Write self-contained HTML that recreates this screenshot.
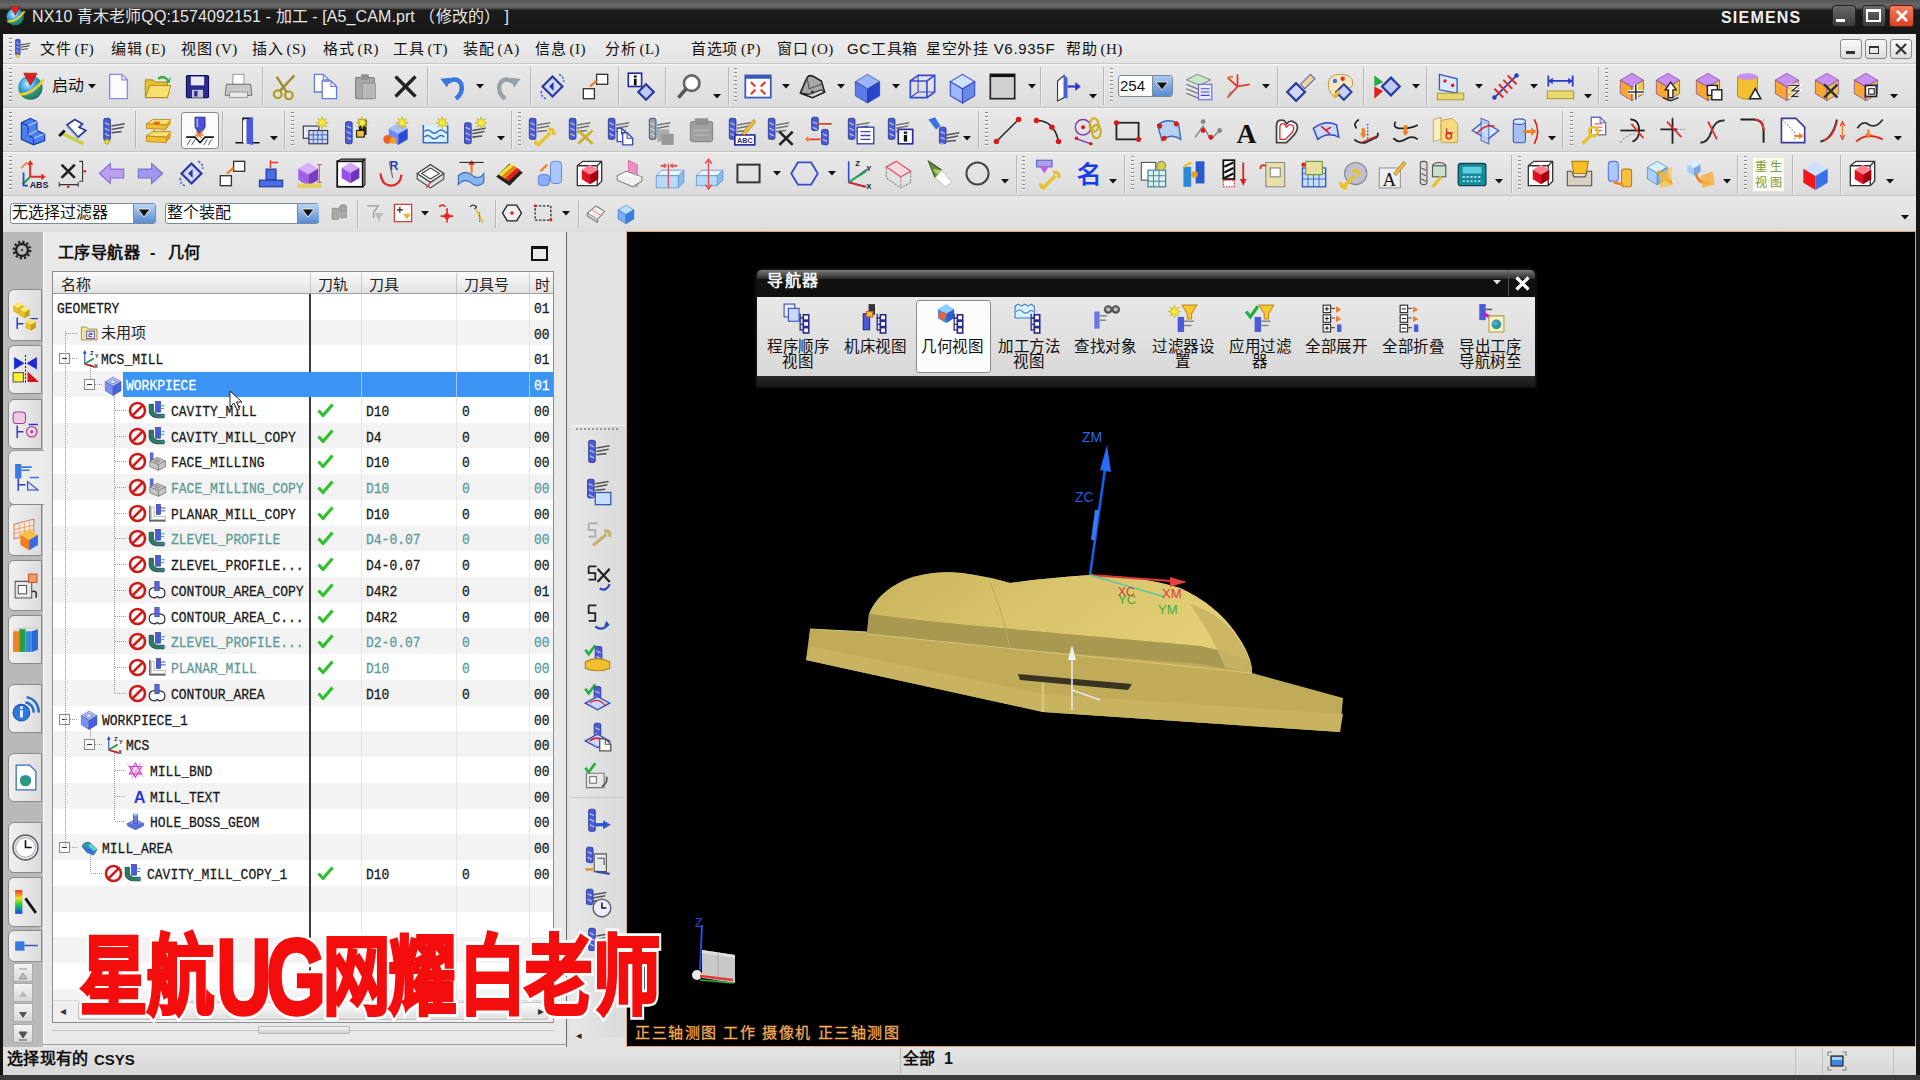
<!DOCTYPE html><html lang="zh-CN"><head><meta charset="utf-8"><style>
*{margin:0;padding:0;box-sizing:border-box}
html,body{width:1920px;height:1080px;overflow:hidden;background:#2b2b2b}
body{position:relative;font-family:"Liberation Sans",sans-serif;color:#000}
.a{position:absolute}
.t{position:absolute;white-space:nowrap;line-height:1}
.m{font-family:"Liberation Mono",monospace;-webkit-text-stroke:0.25px currentColor;transform:scaleY(1.18);transform-origin:0 50%}
svg{position:absolute;overflow:visible}
</style></head><body>
<div class="a" style="left:0px;top:0px;width:1920px;height:34px;background:linear-gradient(#555 0,#676767 5px,#5a5a5a 8px,#1c1c1c 10px,#171717 100%)"></div>
<div class="t" style="left:32px;top:9px;color:#e8e8e8;font-size:16px;letter-spacing:0.1px">NX10 青木老师QQ:1574092151 - 加工 - [A5_CAM.prt （修改的） ]</div>
<div class="t" style="left:1721px;top:10px;color:#f0f0f0;font-size:16px;font-weight:bold;letter-spacing:1.2px">SIEMENS</div>
<div class="a" style="left:0px;top:34px;width:3px;height:1041px;background:#151515"></div>
<div class="a" style="left:1916px;top:34px;width:4px;height:1041px;background:#151515"></div>
<div class="a" style="left:0px;top:1075px;width:1920px;height:5px;background:#3a3a3a"></div>
<div class="a" style="left:3px;top:34px;width:1913px;height:30px;background:linear-gradient(#ececec,#e4e4e4);border-bottom:1px solid #c8c8c8"></div>
<div class="a" style="left:3px;top:64px;width:1913px;height:44px;background:linear-gradient(#e9e9e9,#dcdcdc);border-bottom:1px solid #c4c4c4;border-top:1px solid #f6f6f6"></div>
<div class="a" style="left:3px;top:108px;width:1913px;height:44px;background:linear-gradient(#e9e9e9,#dcdcdc);border-bottom:1px solid #c4c4c4;border-top:1px solid #f6f6f6"></div>
<div class="a" style="left:3px;top:152px;width:1913px;height:44px;background:linear-gradient(#e9e9e9,#dcdcdc);border-bottom:1px solid #c4c4c4;border-top:1px solid #f6f6f6"></div>
<div class="a" style="left:3px;top:196px;width:1913px;height:36px;background:linear-gradient(#e8e8e8,#dedede)"></div>
<div class="a" style="left:3px;top:232px;width:40px;height:815px;background:#b9b9b9"></div>
<div class="a" style="left:43px;top:232px;width:524px;height:815px;background:#e9e9e9;border-left:1px solid #f8f8f8;border-right:1px solid #6a6a6a"></div>
<div class="a" style="left:567px;top:232px;width:60px;height:815px;background:#e2e2e2"></div>
<div class="a" style="left:626px;top:231px;width:1290px;height:816px;background:#000;border:1px solid #d8a878"></div>
<div class="a" style="left:3px;top:1047px;width:1913px;height:28px;background:linear-gradient(#e4e4e4,#d8d8d8)"></div>
<div class="t" style="left:40px;top:41px;font-size:15px;color:#111;letter-spacing:0.7px">文件<span style="font-family:\'Liberation Serif\',serif;margin-left:3px;letter-spacing:0.5px">(F)</span></div>
<div class="t" style="left:111px;top:41px;font-size:15px;color:#111;letter-spacing:0.7px">编辑<span style="font-family:\'Liberation Serif\',serif;margin-left:3px;letter-spacing:0.5px">(E)</span></div>
<div class="t" style="left:181px;top:41px;font-size:15px;color:#111;letter-spacing:0.7px">视图<span style="font-family:\'Liberation Serif\',serif;margin-left:3px;letter-spacing:0.5px">(V)</span></div>
<div class="t" style="left:252px;top:41px;font-size:15px;color:#111;letter-spacing:0.7px">插入<span style="font-family:\'Liberation Serif\',serif;margin-left:3px;letter-spacing:0.5px">(S)</span></div>
<div class="t" style="left:323px;top:41px;font-size:15px;color:#111;letter-spacing:0.7px">格式<span style="font-family:\'Liberation Serif\',serif;margin-left:3px;letter-spacing:0.5px">(R)</span></div>
<div class="t" style="left:393px;top:41px;font-size:15px;color:#111;letter-spacing:0.7px">工具<span style="font-family:\'Liberation Serif\',serif;margin-left:3px;letter-spacing:0.5px">(T)</span></div>
<div class="t" style="left:463px;top:41px;font-size:15px;color:#111;letter-spacing:0.7px">装配<span style="font-family:\'Liberation Serif\',serif;margin-left:3px;letter-spacing:0.5px">(A)</span></div>
<div class="t" style="left:535px;top:41px;font-size:15px;color:#111;letter-spacing:0.7px">信息<span style="font-family:\'Liberation Serif\',serif;margin-left:3px;letter-spacing:0.5px">(I)</span></div>
<div class="t" style="left:605px;top:41px;font-size:15px;color:#111;letter-spacing:0.7px">分析<span style="font-family:\'Liberation Serif\',serif;margin-left:3px;letter-spacing:0.5px">(L)</span></div>
<div class="t" style="left:691px;top:41px;font-size:15px;color:#111;letter-spacing:0.7px">首选项<span style="font-family:\'Liberation Serif\',serif;margin-left:3px;letter-spacing:0.5px">(P)</span></div>
<div class="t" style="left:777px;top:41px;font-size:15px;color:#111;letter-spacing:0.7px">窗口<span style="font-family:\'Liberation Serif\',serif;margin-left:3px;letter-spacing:0.5px">(O)</span></div>
<div class="t" style="left:847px;top:41px;font-size:15px;color:#111;letter-spacing:0.7px">GC工具箱</div>
<div class="t" style="left:926px;top:41px;font-size:15px;color:#111;letter-spacing:0.7px">星空外挂 V6.935F</div>
<div class="t" style="left:1066px;top:41px;font-size:15px;color:#111;letter-spacing:0.7px">帮助<span style="font-family:\'Liberation Serif\',serif;margin-left:3px;letter-spacing:0.5px">(H)</span></div>
<div class="t" style="left:58px;top:245px;font-size:16px;font-weight:bold;color:#111;letter-spacing:0.4px">工序导航器</div>
<div class="t" style="left:150px;top:245px;font-size:16px;font-weight:bold;color:#111">-</div>
<div class="t" style="left:168px;top:245px;font-size:16px;font-weight:bold;color:#111;letter-spacing:0.4px">几何</div>
<div class="a" style="left:531px;top:246px;width:17px;height:15px;border:2px solid #111;border-top-width:3px"></div>
<div class="a" style="left:52px;top:271px;width:502px;height:752px;background:#fff;border:1px solid #8c8c8c"></div>
<div class="a" style="left:53px;top:272px;width:500px;height:22px;background:linear-gradient(#fbfbfb,#e2e2e2);border-bottom:1px solid #a0a0a0"></div>
<div class="a" style="left:310px;top:273px;width:1px;height:20px;background:#c8c8c8"></div>
<div class="a" style="left:361px;top:273px;width:1px;height:20px;background:#c8c8c8"></div>
<div class="a" style="left:456px;top:273px;width:1px;height:20px;background:#c8c8c8"></div>
<div class="a" style="left:529px;top:273px;width:1px;height:20px;background:#c8c8c8"></div>
<div class="t" style="left:61px;top:277px;font-size:15px;color:#222">名称</div>
<div class="t" style="left:318px;top:277px;font-size:15px;color:#222">刀轨</div>
<div class="t" style="left:369px;top:277px;font-size:15px;color:#222">刀具</div>
<div class="t" style="left:464px;top:277px;font-size:15px;color:#222">刀具号</div>
<div class="t" style="left:535px;top:277px;font-size:15px;color:#222">时</div>
<div class="a" style="left:53px;top:294px;width:500px;height:26px;background:#ffffff"></div>
<div class="a" style="left:53px;top:320px;width:500px;height:25px;background:#f3f3f3"></div>
<div class="a" style="left:53px;top:345px;width:500px;height:26px;background:#ffffff"></div>
<div class="a" style="left:53px;top:371px;width:500px;height:26px;background:#f3f3f3"></div>
<div class="a" style="left:53px;top:397px;width:500px;height:26px;background:#ffffff"></div>
<div class="a" style="left:53px;top:423px;width:500px;height:25px;background:#f3f3f3"></div>
<div class="a" style="left:53px;top:448px;width:500px;height:26px;background:#ffffff"></div>
<div class="a" style="left:53px;top:474px;width:500px;height:26px;background:#f3f3f3"></div>
<div class="a" style="left:53px;top:500px;width:500px;height:26px;background:#ffffff"></div>
<div class="a" style="left:53px;top:526px;width:500px;height:25px;background:#f3f3f3"></div>
<div class="a" style="left:53px;top:551px;width:500px;height:26px;background:#ffffff"></div>
<div class="a" style="left:53px;top:577px;width:500px;height:26px;background:#f3f3f3"></div>
<div class="a" style="left:53px;top:603px;width:500px;height:25px;background:#ffffff"></div>
<div class="a" style="left:53px;top:628px;width:500px;height:26px;background:#f3f3f3"></div>
<div class="a" style="left:53px;top:654px;width:500px;height:26px;background:#ffffff"></div>
<div class="a" style="left:53px;top:680px;width:500px;height:26px;background:#f3f3f3"></div>
<div class="a" style="left:53px;top:706px;width:500px;height:25px;background:#ffffff"></div>
<div class="a" style="left:53px;top:731px;width:500px;height:26px;background:#f3f3f3"></div>
<div class="a" style="left:53px;top:757px;width:500px;height:26px;background:#ffffff"></div>
<div class="a" style="left:53px;top:783px;width:500px;height:26px;background:#f3f3f3"></div>
<div class="a" style="left:53px;top:809px;width:500px;height:25px;background:#ffffff"></div>
<div class="a" style="left:53px;top:834px;width:500px;height:26px;background:#f3f3f3"></div>
<div class="a" style="left:53px;top:860px;width:500px;height:26px;background:#ffffff"></div>
<div class="a" style="left:53px;top:886px;width:500px;height:26px;background:#f3f3f3"></div>
<div class="a" style="left:53px;top:912px;width:500px;height:25px;background:#ffffff"></div>
<div class="a" style="left:53px;top:937px;width:500px;height:26px;background:#f3f3f3"></div>
<div class="a" style="left:53px;top:963px;width:500px;height:26px;background:#ffffff"></div>
<div class="a" style="left:53px;top:989px;width:500px;height:25px;background:#f3f3f3"></div>
<div class="a" style="left:361px;top:294px;width:1px;height:706px;background:#e6e6e6"></div>
<div class="a" style="left:456px;top:294px;width:1px;height:706px;background:#e6e6e6"></div>
<div class="a" style="left:529px;top:294px;width:1px;height:706px;background:#e6e6e6"></div>
<div class="a" style="left:309px;top:294px;width:2px;height:706px;background:#3a3a3a"></div>
<div class="t m" style="left:57px;top:302px;font-size:13px;color:#1a1a1a">GEOMETRY</div>
<div class="t m" style="left:534px;top:302px;font-size:13px;color:#1a1a1a">01</div>
<div class="t" style="left:101px;top:325px;font-size:15px;color:#222">未用项</div>
<div class="t m" style="left:534px;top:328px;font-size:13px;color:#1a1a1a">00</div>
<div class="t m" style="left:101px;top:353px;font-size:13px;color:#1a1a1a">MCS_MILL</div>
<div class="a" style="left:59px;top:353px;width:11px;height:11px;border:1px solid #8a8a8a;background:#fafafa"><div class="a" style="left:2px;top:4px;width:5px;height:1px;background:#333"></div></div>
<div class="t m" style="left:534px;top:353px;font-size:13px;color:#1a1a1a">01</div>
<div class="a" style="left:123px;top:372px;width:430px;height:25px;background:#3b93f4"></div>
<div class="a" style="left:361px;top:372px;width:1px;height:25px;background:#9cc8f8"></div>
<div class="a" style="left:456px;top:372px;width:1px;height:25px;background:#9cc8f8"></div>
<div class="a" style="left:529px;top:372px;width:1px;height:25px;background:#9cc8f8"></div>
<div class="t m" style="left:126px;top:379px;font-size:13px;color:#ffffff">WORKPIECE</div>
<div class="a" style="left:84px;top:379px;width:11px;height:11px;border:1px solid #8a8a8a;background:#fafafa"><div class="a" style="left:2px;top:4px;width:5px;height:1px;background:#333"></div></div>
<div class="t m" style="left:534px;top:379px;font-size:13px;color:#fff">01</div>
<div class="t m" style="left:171px;top:405px;font-size:13px;color:#1a1a1a">CAVITY_MILL</div>
<svg style="left:128px;top:401px" width="19" height="19" viewBox="0 0 19 19"><circle cx="9.5" cy="9.5" r="7.5" fill="none" stroke="#d01818" stroke-width="2.6"/><line x1="4.3" y1="14.7" x2="14.7" y2="4.3" stroke="#d01818" stroke-width="2.6"/></svg>
<svg style="left:317px;top:402px" width="17" height="16" viewBox="0 0 17 16"><path d="M1.5 8.5 L6 13.5 L15.5 2.5" fill="none" stroke="#2ec02e" stroke-width="3.2" stroke-linejoin="round"/></svg>
<div class="t m" style="left:366px;top:405px;font-size:13px;color:#1a1a1a">D10</div>
<div class="t m" style="left:462px;top:405px;font-size:13px;color:#1a1a1a">0</div>
<div class="t m" style="left:534px;top:405px;font-size:13px;color:#1a1a1a">00</div>
<div class="t m" style="left:171px;top:431px;font-size:13px;color:#1a1a1a">CAVITY_MILL_COPY</div>
<svg style="left:128px;top:427px" width="19" height="19" viewBox="0 0 19 19"><circle cx="9.5" cy="9.5" r="7.5" fill="none" stroke="#d01818" stroke-width="2.6"/><line x1="4.3" y1="14.7" x2="14.7" y2="4.3" stroke="#d01818" stroke-width="2.6"/></svg>
<svg style="left:317px;top:428px" width="17" height="16" viewBox="0 0 17 16"><path d="M1.5 8.5 L6 13.5 L15.5 2.5" fill="none" stroke="#2ec02e" stroke-width="3.2" stroke-linejoin="round"/></svg>
<div class="t m" style="left:366px;top:431px;font-size:13px;color:#1a1a1a">D4</div>
<div class="t m" style="left:462px;top:431px;font-size:13px;color:#1a1a1a">0</div>
<div class="t m" style="left:534px;top:431px;font-size:13px;color:#1a1a1a">00</div>
<div class="t m" style="left:171px;top:456px;font-size:13px;color:#1a1a1a">FACE_MILLING</div>
<svg style="left:128px;top:452px" width="19" height="19" viewBox="0 0 19 19"><circle cx="9.5" cy="9.5" r="7.5" fill="none" stroke="#d01818" stroke-width="2.6"/><line x1="4.3" y1="14.7" x2="14.7" y2="4.3" stroke="#d01818" stroke-width="2.6"/></svg>
<svg style="left:317px;top:453px" width="17" height="16" viewBox="0 0 17 16"><path d="M1.5 8.5 L6 13.5 L15.5 2.5" fill="none" stroke="#2ec02e" stroke-width="3.2" stroke-linejoin="round"/></svg>
<div class="t m" style="left:366px;top:456px;font-size:13px;color:#1a1a1a">D10</div>
<div class="t m" style="left:462px;top:456px;font-size:13px;color:#1a1a1a">0</div>
<div class="t m" style="left:534px;top:456px;font-size:13px;color:#1a1a1a">00</div>
<div class="t m" style="left:171px;top:482px;font-size:13px;color:#5c9a9a">FACE_MILLING_COPY</div>
<svg style="left:128px;top:478px" width="19" height="19" viewBox="0 0 19 19"><circle cx="9.5" cy="9.5" r="7.5" fill="none" stroke="#d01818" stroke-width="2.6"/><line x1="4.3" y1="14.7" x2="14.7" y2="4.3" stroke="#d01818" stroke-width="2.6"/></svg>
<svg style="left:317px;top:479px" width="17" height="16" viewBox="0 0 17 16"><path d="M1.5 8.5 L6 13.5 L15.5 2.5" fill="none" stroke="#2ec02e" stroke-width="3.2" stroke-linejoin="round"/></svg>
<div class="t m" style="left:366px;top:482px;font-size:13px;color:#5c9a9a">D10</div>
<div class="t m" style="left:462px;top:482px;font-size:13px;color:#5c9a9a">0</div>
<div class="t m" style="left:534px;top:482px;font-size:13px;color:#5c9a9a">00</div>
<div class="t m" style="left:171px;top:508px;font-size:13px;color:#1a1a1a">PLANAR_MILL_COPY</div>
<svg style="left:128px;top:504px" width="19" height="19" viewBox="0 0 19 19"><circle cx="9.5" cy="9.5" r="7.5" fill="none" stroke="#d01818" stroke-width="2.6"/><line x1="4.3" y1="14.7" x2="14.7" y2="4.3" stroke="#d01818" stroke-width="2.6"/></svg>
<svg style="left:317px;top:505px" width="17" height="16" viewBox="0 0 17 16"><path d="M1.5 8.5 L6 13.5 L15.5 2.5" fill="none" stroke="#2ec02e" stroke-width="3.2" stroke-linejoin="round"/></svg>
<div class="t m" style="left:366px;top:508px;font-size:13px;color:#1a1a1a">D10</div>
<div class="t m" style="left:462px;top:508px;font-size:13px;color:#1a1a1a">0</div>
<div class="t m" style="left:534px;top:508px;font-size:13px;color:#1a1a1a">00</div>
<div class="t m" style="left:171px;top:533px;font-size:13px;color:#5c9a9a">ZLEVEL_PROFILE</div>
<svg style="left:128px;top:529px" width="19" height="19" viewBox="0 0 19 19"><circle cx="9.5" cy="9.5" r="7.5" fill="none" stroke="#d01818" stroke-width="2.6"/><line x1="4.3" y1="14.7" x2="14.7" y2="4.3" stroke="#d01818" stroke-width="2.6"/></svg>
<svg style="left:317px;top:530px" width="17" height="16" viewBox="0 0 17 16"><path d="M1.5 8.5 L6 13.5 L15.5 2.5" fill="none" stroke="#2ec02e" stroke-width="3.2" stroke-linejoin="round"/></svg>
<div class="t m" style="left:366px;top:533px;font-size:13px;color:#5c9a9a">D4-0.07</div>
<div class="t m" style="left:462px;top:533px;font-size:13px;color:#5c9a9a">0</div>
<div class="t m" style="left:534px;top:533px;font-size:13px;color:#5c9a9a">00</div>
<div class="t m" style="left:171px;top:559px;font-size:13px;color:#1a1a1a">ZLEVEL_PROFILE...</div>
<svg style="left:128px;top:555px" width="19" height="19" viewBox="0 0 19 19"><circle cx="9.5" cy="9.5" r="7.5" fill="none" stroke="#d01818" stroke-width="2.6"/><line x1="4.3" y1="14.7" x2="14.7" y2="4.3" stroke="#d01818" stroke-width="2.6"/></svg>
<svg style="left:317px;top:556px" width="17" height="16" viewBox="0 0 17 16"><path d="M1.5 8.5 L6 13.5 L15.5 2.5" fill="none" stroke="#2ec02e" stroke-width="3.2" stroke-linejoin="round"/></svg>
<div class="t m" style="left:366px;top:559px;font-size:13px;color:#1a1a1a">D4-0.07</div>
<div class="t m" style="left:462px;top:559px;font-size:13px;color:#1a1a1a">0</div>
<div class="t m" style="left:534px;top:559px;font-size:13px;color:#1a1a1a">00</div>
<div class="t m" style="left:171px;top:585px;font-size:13px;color:#1a1a1a">CONTOUR_AREA_COPY</div>
<svg style="left:128px;top:581px" width="19" height="19" viewBox="0 0 19 19"><circle cx="9.5" cy="9.5" r="7.5" fill="none" stroke="#d01818" stroke-width="2.6"/><line x1="4.3" y1="14.7" x2="14.7" y2="4.3" stroke="#d01818" stroke-width="2.6"/></svg>
<svg style="left:317px;top:582px" width="17" height="16" viewBox="0 0 17 16"><path d="M1.5 8.5 L6 13.5 L15.5 2.5" fill="none" stroke="#2ec02e" stroke-width="3.2" stroke-linejoin="round"/></svg>
<div class="t m" style="left:366px;top:585px;font-size:13px;color:#1a1a1a">D4R2</div>
<div class="t m" style="left:462px;top:585px;font-size:13px;color:#1a1a1a">0</div>
<div class="t m" style="left:534px;top:585px;font-size:13px;color:#1a1a1a">01</div>
<div class="t m" style="left:171px;top:611px;font-size:13px;color:#1a1a1a">CONTOUR_AREA_C...</div>
<svg style="left:128px;top:607px" width="19" height="19" viewBox="0 0 19 19"><circle cx="9.5" cy="9.5" r="7.5" fill="none" stroke="#d01818" stroke-width="2.6"/><line x1="4.3" y1="14.7" x2="14.7" y2="4.3" stroke="#d01818" stroke-width="2.6"/></svg>
<svg style="left:317px;top:608px" width="17" height="16" viewBox="0 0 17 16"><path d="M1.5 8.5 L6 13.5 L15.5 2.5" fill="none" stroke="#2ec02e" stroke-width="3.2" stroke-linejoin="round"/></svg>
<div class="t m" style="left:366px;top:611px;font-size:13px;color:#1a1a1a">D4R2</div>
<div class="t m" style="left:462px;top:611px;font-size:13px;color:#1a1a1a">0</div>
<div class="t m" style="left:534px;top:611px;font-size:13px;color:#1a1a1a">00</div>
<div class="t m" style="left:171px;top:636px;font-size:13px;color:#5c9a9a">ZLEVEL_PROFILE...</div>
<svg style="left:128px;top:632px" width="19" height="19" viewBox="0 0 19 19"><circle cx="9.5" cy="9.5" r="7.5" fill="none" stroke="#d01818" stroke-width="2.6"/><line x1="4.3" y1="14.7" x2="14.7" y2="4.3" stroke="#d01818" stroke-width="2.6"/></svg>
<svg style="left:317px;top:633px" width="17" height="16" viewBox="0 0 17 16"><path d="M1.5 8.5 L6 13.5 L15.5 2.5" fill="none" stroke="#2ec02e" stroke-width="3.2" stroke-linejoin="round"/></svg>
<div class="t m" style="left:366px;top:636px;font-size:13px;color:#5c9a9a">D2-0.07</div>
<div class="t m" style="left:462px;top:636px;font-size:13px;color:#5c9a9a">0</div>
<div class="t m" style="left:534px;top:636px;font-size:13px;color:#5c9a9a">00</div>
<div class="t m" style="left:171px;top:662px;font-size:13px;color:#5c9a9a">PLANAR_MILL</div>
<svg style="left:128px;top:658px" width="19" height="19" viewBox="0 0 19 19"><circle cx="9.5" cy="9.5" r="7.5" fill="none" stroke="#d01818" stroke-width="2.6"/><line x1="4.3" y1="14.7" x2="14.7" y2="4.3" stroke="#d01818" stroke-width="2.6"/></svg>
<svg style="left:317px;top:659px" width="17" height="16" viewBox="0 0 17 16"><path d="M1.5 8.5 L6 13.5 L15.5 2.5" fill="none" stroke="#2ec02e" stroke-width="3.2" stroke-linejoin="round"/></svg>
<div class="t m" style="left:366px;top:662px;font-size:13px;color:#5c9a9a">D10</div>
<div class="t m" style="left:462px;top:662px;font-size:13px;color:#5c9a9a">0</div>
<div class="t m" style="left:534px;top:662px;font-size:13px;color:#5c9a9a">00</div>
<div class="t m" style="left:171px;top:688px;font-size:13px;color:#1a1a1a">CONTOUR_AREA</div>
<svg style="left:128px;top:684px" width="19" height="19" viewBox="0 0 19 19"><circle cx="9.5" cy="9.5" r="7.5" fill="none" stroke="#d01818" stroke-width="2.6"/><line x1="4.3" y1="14.7" x2="14.7" y2="4.3" stroke="#d01818" stroke-width="2.6"/></svg>
<svg style="left:317px;top:685px" width="17" height="16" viewBox="0 0 17 16"><path d="M1.5 8.5 L6 13.5 L15.5 2.5" fill="none" stroke="#2ec02e" stroke-width="3.2" stroke-linejoin="round"/></svg>
<div class="t m" style="left:366px;top:688px;font-size:13px;color:#1a1a1a">D10</div>
<div class="t m" style="left:462px;top:688px;font-size:13px;color:#1a1a1a">0</div>
<div class="t m" style="left:534px;top:688px;font-size:13px;color:#1a1a1a">00</div>
<div class="t m" style="left:102px;top:714px;font-size:13px;color:#1a1a1a">WORKPIECE_1</div>
<div class="a" style="left:59px;top:714px;width:11px;height:11px;border:1px solid #8a8a8a;background:#fafafa"><div class="a" style="left:2px;top:4px;width:5px;height:1px;background:#333"></div></div>
<div class="t m" style="left:534px;top:714px;font-size:13px;color:#1a1a1a">00</div>
<div class="t m" style="left:126px;top:739px;font-size:13px;color:#1a1a1a">MCS</div>
<div class="a" style="left:84px;top:739px;width:11px;height:11px;border:1px solid #8a8a8a;background:#fafafa"><div class="a" style="left:2px;top:4px;width:5px;height:1px;background:#333"></div></div>
<div class="t m" style="left:534px;top:739px;font-size:13px;color:#1a1a1a">00</div>
<div class="t m" style="left:150px;top:765px;font-size:13px;color:#1a1a1a">MILL_BND</div>
<div class="t m" style="left:534px;top:765px;font-size:13px;color:#1a1a1a">00</div>
<div class="t m" style="left:150px;top:791px;font-size:13px;color:#1a1a1a">MILL_TEXT</div>
<div class="t m" style="left:534px;top:791px;font-size:13px;color:#1a1a1a">00</div>
<div class="t m" style="left:150px;top:816px;font-size:13px;color:#1a1a1a">HOLE_BOSS_GEOM</div>
<div class="t m" style="left:534px;top:816px;font-size:13px;color:#1a1a1a">00</div>
<div class="t m" style="left:102px;top:842px;font-size:13px;color:#1a1a1a">MILL_AREA</div>
<div class="a" style="left:59px;top:842px;width:11px;height:11px;border:1px solid #8a8a8a;background:#fafafa"><div class="a" style="left:2px;top:4px;width:5px;height:1px;background:#333"></div></div>
<div class="t m" style="left:534px;top:842px;font-size:13px;color:#1a1a1a">00</div>
<div class="t m" style="left:147px;top:868px;font-size:13px;color:#1a1a1a">CAVITY_MILL_COPY_1</div>
<svg style="left:104px;top:864px" width="19" height="19" viewBox="0 0 19 19"><circle cx="9.5" cy="9.5" r="7.5" fill="none" stroke="#d01818" stroke-width="2.6"/><line x1="4.3" y1="14.7" x2="14.7" y2="4.3" stroke="#d01818" stroke-width="2.6"/></svg>
<svg style="left:317px;top:865px" width="17" height="16" viewBox="0 0 17 16"><path d="M1.5 8.5 L6 13.5 L15.5 2.5" fill="none" stroke="#2ec02e" stroke-width="3.2" stroke-linejoin="round"/></svg>
<div class="t m" style="left:366px;top:868px;font-size:13px;color:#1a1a1a">D10</div>
<div class="t m" style="left:462px;top:868px;font-size:13px;color:#1a1a1a">0</div>
<div class="t m" style="left:534px;top:868px;font-size:13px;color:#1a1a1a">00</div>
<div class="a" style="left:53px;top:1000px;width:500px;height:22px;background:#efefef;border-top:1px solid #dcdcdc"></div>
<div class="a" style="left:78px;top:1002px;width:470px;height:18px;background:linear-gradient(#fafafa,#dedede);border:1px solid #c0c0c0;border-radius:2px"></div>
<div class="t" style="left:60px;top:1005px;font-size:12px;color:#333">◂</div>
<div class="t" style="left:538px;top:1005px;font-size:12px;color:#333">▸</div>
<div class="a" style="left:52px;top:1030px;width:502px;height:1px;background:#c8c8c8"></div>
<div class="a" style="left:258px;top:1026px;width:92px;height:8px;background:linear-gradient(#f4f4f4,#cfcfcf);border:1px solid #b4b4b4;border-radius:2px"></div>
<div class="a" style="left:43px;top:1044px;width:524px;height:1px;background:#9a9a9a"></div>
<div class="t" style="left:7px;top:1051px;font-size:16px;font-weight:bold;color:#111;letter-spacing:0.3px">选择现有的</div>
<div class="t" style="left:94px;top:1052px;font-size:15px;font-weight:bold;color:#111;font-family:"Liberation Mono",monospace">CSYS</div>
<div class="a" style="left:900px;top:1048px;width:1px;height:26px;background:#f8f8f8;border-left:1px solid #b8b8b8"></div>
<div class="t" style="left:903px;top:1051px;font-size:16px;font-weight:bold;color:#111">全部&nbsp; 1</div>
<div class="a" style="left:1795px;top:1048px;width:1px;height:26px;background:#c0c0c0"></div>
<div class="a" style="left:1822px;top:1048px;width:1px;height:26px;background:#c0c0c0"></div>
<div class="a" style="left:1893px;top:1048px;width:1px;height:26px;background:#c0c0c0"></div>
<svg width="0" height="0" style="position:absolute"><defs><radialGradient id="gg" cx="0.4" cy="0.35" r="0.7"><stop offset="0" stop-color="#c8f0ff"/><stop offset="0.45" stop-color="#3aa0e8"/><stop offset="0.8" stop-color="#2a8a4a"/><stop offset="1" stop-color="#1a5a9a"/></radialGradient></defs></svg>
<svg style="left:15.5px;top:70.5px" width="31" height="31" viewBox="0 0 28 28"><circle cx="13" cy="15" r="11" fill="url(#gg)"/><path d="M3 21 Q14 22 25 8" fill="none" stroke="#e8d030" stroke-width="2.5"/><path d="M7 2 L19 2 L13 13 Z" fill="#e02020" stroke="#901010" stroke-width="0.6"/></svg>
<svg style="left:102.5px;top:70.5px" width="31" height="31" viewBox="0 0 28 28"><path d="M6 3 L17 3 L22 8 L22 25 L6 25 Z" fill="#fbfbff" stroke="#8a8ae0" stroke-width="1.2"/><path d="M17 3 L17 8 L22 8" fill="none" stroke="#8a8ae0" stroke-width="1"/></svg>
<svg style="left:141.5px;top:70.5px" width="31" height="31" viewBox="0 0 28 28"><path d="M3 8 L10 8 L12 10 L23 10 L23 24 L3 24 Z" fill="#e8c030" stroke="#a88010" stroke-width="0.8"/><path d="M3 24 L7 13 L26 13 L23 24 Z" fill="#f8e070" stroke="#a88010" stroke-width="0.8"/><path d="M14 6 Q20 2 24 8 L26 5 L25 11 L20 10 L23 9 Q20 5 15 8 Z" fill="#30b040"/></svg>
<svg style="left:181.5px;top:70.5px" width="31" height="31" viewBox="0 0 28 28"><rect x="4" y="4" width="20" height="20" rx="1" fill="#2a2a90" stroke="#101050"/><rect x="8" y="5" width="12" height="8" fill="#e8e8f8"/><rect x="9" y="17" width="10" height="7" fill="#c8c8d8"/><rect x="11" y="18" width="3" height="5" fill="#2a2a90"/></svg>
<svg style="left:222.5px;top:70.5px" width="31" height="31" viewBox="0 0 28 28"><rect x="9" y="3" width="10" height="9" fill="#fff" stroke="#888" stroke-width="0.8"/><path d="M3 12 L25 12 L26 22 L2 22 Z" fill="#c8c8c8" stroke="#666" stroke-width="0.8"/><rect x="6" y="19" width="16" height="5" fill="#e8e8e8" stroke="#777" stroke-width="0.6"/></svg>
<svg style="left:269.5px;top:70.5px" width="31" height="31" viewBox="0 0 28 28"><circle cx="7" cy="21" r="3.5" fill="none" stroke="#b0a020" stroke-width="2"/><circle cx="17" cy="22" r="3.5" fill="none" stroke="#b0a020" stroke-width="2"/><path d="M9 18 L22 4 M15 19 L6 5" stroke="#a09030" stroke-width="2.2"/></svg>
<svg style="left:309.5px;top:70.5px" width="31" height="31" viewBox="0 0 28 28"><path d="M4 3 L12 3 L17 8 L17 19 L4 19 Z" fill="#fff" stroke="#6a7ad8" stroke-width="1.2"/><path d="M12 3 L12 8 L17 8" fill="none" stroke="#6a7ad8" stroke-width="1"/><path d="M11 9 L19 9 L24 14 L24 25 L11 25 Z" fill="#fff" stroke="#6a7ad8" stroke-width="1.2"/><path d="M19 9 L19 14 L24 14" fill="none" stroke="#6a7ad8" stroke-width="1"/></svg>
<svg style="left:349.5px;top:70.5px" width="31" height="31" viewBox="0 0 28 28"><rect x="5" y="6" width="17" height="19" rx="1" fill="#a8a8a8" stroke="#808080"/><rect x="10" y="3" width="7" height="5" fill="#909090"/><rect x="11" y="11" width="12" height="14" fill="#b8b8b8" stroke="#888" stroke-width="0.6"/></svg>
<svg style="left:389.5px;top:70.5px" width="31" height="31" viewBox="0 0 28 28"><path d="M5 5 L23 23 M23 5 L5 23" stroke="#222" stroke-width="3"/></svg>
<svg style="left:436.5px;top:70.5px" width="31" height="31" viewBox="0 0 28 28"><path d="M8 11 Q18 4 22 12 Q24 20 17 25" fill="none" stroke="#3a78e0" stroke-width="4"/><path d="M3 7 L12 6 L9 15 Z" fill="#3a78e0"/></svg>
<svg style="left:492.5px;top:70.5px" width="31" height="31" viewBox="0 0 28 28"><path d="M20 11 Q10 4 6 12 Q4 20 11 25" fill="none" stroke="#9aa0a8" stroke-width="4"/><path d="M25 7 L16 6 L19 15 Z" fill="#9aa0a8"/></svg>
<svg style="left:536.5px;top:70.5px" width="31" height="31" viewBox="0 0 28 28"><path d="M14 5 L23 14 L14 23 L5 14 Z" fill="#d0d8ff" stroke="#2a3a9a" stroke-width="2"/><path d="M11 14 L15 10 L15 18 Z" fill="#2a3a9a"/><path d="M20 3 Q25 6 24 10 M4 18 Q3 23 8 25" fill="none" stroke="#4a70e0" stroke-width="1.6" stroke-dasharray="2 1.5"/></svg>
<svg style="left:579.5px;top:70.5px" width="31" height="31" viewBox="0 0 28 28"><rect x="15" y="3" width="10" height="9" fill="#fff" stroke="#333" stroke-width="1.2"/><rect x="3" y="16" width="10" height="9" fill="#fff" stroke="#333" stroke-width="1.2"/><path d="M9 14 L15 9" stroke="#f08020" stroke-width="2"/></svg>
<svg style="left:624.5px;top:70.5px" width="31" height="31" viewBox="0 0 28 28"><rect x="3" y="2" width="12" height="12" fill="#fff" stroke="#2a2a9a" stroke-width="1.5"/><rect x="8" y="4" width="2.5" height="2" fill="#111"/><rect x="8" y="7" width="2.5" height="6" fill="#111"/><path d="M19 12 L26 19 L19 26 L12 19 Z" fill="#c0c8ff" stroke="#2a3a9a" stroke-width="2"/></svg>
<svg style="left:673.5px;top:70.5px" width="31" height="31" viewBox="0 0 28 28"><circle cx="16" cy="11" r="7" fill="#fff" stroke="#666" stroke-width="2.4"/><path d="M11 16 L4 24" stroke="#555" stroke-width="3.2"/></svg>
<svg style="left:741.5px;top:70.5px" width="31" height="31" viewBox="0 0 28 28"><rect x="3" y="4" width="23" height="20" fill="#fff" stroke="#3a5ab8" stroke-width="1.6"/><rect x="3" y="4" width="23" height="3" fill="#3a5ab8"/><path d="M8 10 L12 14 M21 10 L17 14 M8 21 L12 17 M21 21 L17 17" stroke="#e83a2a" stroke-width="2"/></svg>
<svg style="left:796.5px;top:70.5px" width="31" height="31" viewBox="0 0 28 28"><path d="M3 20 L9 6 Q11 3 15 5 L22 9 L25 19 L14 24 Z" fill="#a8a8a8" stroke="#222" stroke-width="1.4"/><path d="M3 20 L14 24 L25 19 L22 17 L11 21 Z" fill="#d0d0d0" stroke="#222" stroke-width="1"/><path d="M9 6 L11 16 L22 12" fill="none" stroke="#555" stroke-width="1"/><circle cx="14" cy="19" r="1.5" fill="#333"/></svg>
<svg style="left:851.5px;top:70.5px" width="31" height="31" viewBox="0 0 28 28"><path d="M3 9.6 L14.0 3 L25 9.6 L14.0 16.2 Z" fill="#9ab4ff" stroke="#2a3aa0" stroke-width="0.6"/><path d="M3 9.6 L14.0 16.2 L14.0 28.96 L3 22.36 Z" fill="#5a7ae8" stroke="#2a3aa0" stroke-width="0.6"/><path d="M25 9.6 L14.0 16.2 L14.0 28.96 L25 22.36 Z" fill="#2a46c8" stroke="#2a3aa0" stroke-width="0.6"/></svg>
<svg style="left:906.5px;top:70.5px" width="31" height="31" viewBox="0 0 28 28"><path d="M3 9 L10 4 L25 4 L25 19 L18 24 L3 24 Z M3 9 L18 9 L25 4 M18 9 L18 24" fill="none" stroke="#3a4ad0" stroke-width="1.5"/><path d="M3 24 L10 19 L25 19 M10 4 L10 19" fill="none" stroke="#3a4ad0" stroke-width="1"/></svg>
<svg style="left:946.5px;top:70.5px" width="31" height="31" viewBox="0 0 28 28"><path d="M3 9.6 L14.0 3 L25 9.6 L14.0 16.2 Z" fill="#d0e0ff" stroke="#3a4ad0" stroke-width="1"/><path d="M3 9.6 L14.0 16.2 L14.0 28.96 L3 22.36 Z" fill="#a0b8f8" stroke="#3a4ad0" stroke-width="1"/><path d="M25 9.6 L14.0 16.2 L14.0 28.96 L25 22.36 Z" fill="#6a8ae8" stroke="#3a4ad0" stroke-width="1"/></svg>
<svg style="left:986.5px;top:70.5px" width="31" height="31" viewBox="0 0 28 28"><rect x="3" y="3" width="22" height="22" fill="#d0d0d0" stroke="#222" stroke-width="1.5"/><rect x="3" y="3" width="22" height="2.5" fill="#111"/></svg>
<svg style="left:1051.5px;top:70.5px" width="31" height="31" viewBox="0 0 28 28"><path d="M5 9 L11 4 L11 24 L5 27 Z" fill="#fff" stroke="#333" stroke-width="1"/><path d="M11 4 L14 6 L14 25 L11 24 Z" fill="#4a60d8"/><path d="M14 14 L24 14" stroke="#2a3ad0" stroke-width="2"/><path d="M21 10 L26 14 L21 18 Z" fill="#2a3ad0"/></svg>
<svg style="left:1182.5px;top:70.5px" width="31" height="31" viewBox="0 0 28 28"><path d="M3 8 L13 3 L25 8 L15 13 Z" fill="#c8e8c8" stroke="#666" stroke-width="0.7"/><path d="M3 12 L15 17 L25 12 M3 16 L15 21 L25 16 M3 20 L15 25 L25 20" fill="none" stroke="#666" stroke-width="1"/><rect x="14" y="12" width="12" height="14" fill="#e8e8ff" stroke="#6a6ad0" stroke-width="1"/><path d="M16 16 H24 M16 19 H24 M16 22 H24" stroke="#4a4ab0" stroke-width="1"/></svg>
<svg style="left:1221.5px;top:70.5px" width="31" height="31" viewBox="0 0 28 28"><path d="M14 14 L14 3 M14 14 L25 12 M14 14 L5 6 M14 14 L5 24" stroke="#e03a2a" stroke-width="1.6"/><path d="M5 24 L8 18" stroke="#999" stroke-width="1.2"/><path d="M5 6 L10 5" stroke="#f08030" stroke-width="2"/></svg>
<svg style="left:1284.5px;top:70.5px" width="31" height="31" viewBox="0 0 28 28"><path d="M10 11 L18 19 L10 27 L2 19 Z" fill="#d0d8ff" stroke="#2a3a9a" stroke-width="2"/><path d="M14 12 L23 3 L27 7 L18 16 Z" fill="#e8d8a0" stroke="#6a6ab0" stroke-width="1"/></svg>
<svg style="left:1324.5px;top:70.5px" width="31" height="31" viewBox="0 0 28 28"><path d="M3 12 Q3 3 14 3 Q25 3 25 11 Q25 17 17 15 Q13 16 13 21 Q12 25 7 22 Q3 18 3 12 Z" fill="#f8e8c0" stroke="#b09040" stroke-width="0.8"/><circle cx="9" cy="9" r="2" fill="#3a70e0"/><circle cx="16" cy="7" r="2" fill="#e03030"/><path d="M17 12 L24 19 L17 26 L10 19 Z" fill="#c8d0ff" stroke="#2a3a9a" stroke-width="1.8"/><path d="M8 24 L13 18" stroke="#e0c030" stroke-width="3"/></svg>
<svg style="left:1370.5px;top:70.5px" width="31" height="31" viewBox="0 0 28 28"><path d="M3 4 L11 10 L3 14 Z" fill="#20b040"/><path d="M3 14 L11 18 L3 25 Z" fill="#e02020"/><path d="M18 6 L26 14 L18 22 L10 14 Z" fill="#c0c8ff" stroke="#2a3a9a" stroke-width="2"/></svg>
<svg style="left:1434.5px;top:70.5px" width="31" height="31" viewBox="0 0 28 28"><path d="M4 3 L20 7 L20 20 L4 17 Z" fill="#d8e8ff" stroke="#3a5ab8" stroke-width="1.2"/><circle cx="9" cy="9" r="1.6" fill="#e02020"/><circle cx="16" cy="13" r="1.6" fill="#e02020"/><rect x="2" y="20" width="24" height="6" fill="#e8d870" stroke="#a89030" stroke-width="0.8"/></svg>
<svg style="left:1489.5px;top:70.5px" width="31" height="31" viewBox="0 0 28 28"><path d="M3 25 L25 3" stroke="#2a3ac0" stroke-width="1.5"/><path d="M4 16 L12 24 M8 12 L16 20 M12 8 L20 16 M16 4 L24 12" stroke="#e02a2a" stroke-width="1.8"/><circle cx="4" cy="24" r="2" fill="#2a3ac0"/><circle cx="24" cy="4" r="2" fill="#2a3ac0"/></svg>
<svg style="left:1544.5px;top:70.5px" width="31" height="31" viewBox="0 0 28 28"><path d="M3 9 H25 M3 4 V14 M25 4 V14" stroke="#2a3ac0" stroke-width="1.6"/><path d="M3 9 L7 6 L7 12 Z M25 9 L21 6 L21 12 Z" fill="#2a3ac0"/><rect x="2" y="18" width="24" height="7" fill="#e8d870" stroke="#a89030" stroke-width="0.8"/></svg>
<svg style="left:1616.5px;top:70.5px" width="31" height="31" viewBox="0 0 28 28"><path d="M3 8.3 L13.5 2 L24 8.3 L13.5 14.6 Z" fill="#c890f0" stroke="#7a3aa0" stroke-width="0.6"/><path d="M3 8.3 L13.5 14.6 L13.5 26.78 L3 20.48 Z" fill="#f8a830" stroke="#7a3aa0" stroke-width="0.6"/><path d="M24 8.3 L13.5 14.6 L13.5 26.78 L24 20.48 Z" fill="#f0c850" stroke="#7a3aa0" stroke-width="0.6"/><path d="M17 12 V26 M10 19 H24" stroke="#fff" stroke-width="3.5"/><path d="M17 12 V26 M10 19 H24" stroke="#333" stroke-width="1.4"/></svg>
<svg style="left:1652.5px;top:70.5px" width="31" height="31" viewBox="0 0 28 28"><path d="M3 8.3 L13.5 2 L24 8.3 L13.5 14.6 Z" fill="#c890f0" stroke="#7a3aa0" stroke-width="0.6"/><path d="M3 8.3 L13.5 14.6 L13.5 26.78 L3 20.48 Z" fill="#f8a830" stroke="#7a3aa0" stroke-width="0.6"/><path d="M24 8.3 L13.5 14.6 L13.5 26.78 L24 20.48 Z" fill="#f0c850" stroke="#7a3aa0" stroke-width="0.6"/><path d="M16 10 L21 17 L18 17 L18 24 L14 24 L14 17 L11 17 Z" fill="#fff" stroke="#222" stroke-width="1.2"/><path d="M9 24 L16 27 L23 24" fill="none" stroke="#222" stroke-width="1.2"/></svg>
<svg style="left:1692.5px;top:70.5px" width="31" height="31" viewBox="0 0 28 28"><path d="M3 8.3 L13.5 2 L24 8.3 L13.5 14.6 Z" fill="#c890f0" stroke="#7a3aa0" stroke-width="0.6"/><path d="M3 8.3 L13.5 14.6 L13.5 26.78 L3 20.48 Z" fill="#f8a830" stroke="#7a3aa0" stroke-width="0.6"/><path d="M24 8.3 L13.5 14.6 L13.5 26.78 L24 20.48 Z" fill="#f0c850" stroke="#7a3aa0" stroke-width="0.6"/><rect x="13" y="13" width="9" height="9" fill="#fff" stroke="#222" stroke-width="1.3"/><rect x="17" y="17" width="9" height="9" fill="#fff" stroke="#222" stroke-width="1.3"/></svg>
<svg style="left:1731.5px;top:70.5px" width="31" height="31" viewBox="0 0 28 28"><path d="M5 5 V23 Q14 28 23 23 V5" fill="#f0c030" stroke="#b08010" stroke-width="0.8"/><ellipse cx="14" cy="5" rx="9" ry="3" fill="#c890f0"/><path d="M16 25 L21 16 L26 25 Z" fill="#fff" stroke="#222" stroke-width="1.4"/></svg>
<svg style="left:1771.5px;top:70.5px" width="31" height="31" viewBox="0 0 28 28"><path d="M3 8.3 L13.5 2 L24 8.3 L13.5 14.6 Z" fill="#c890f0" stroke="#7a3aa0" stroke-width="0.6"/><path d="M3 8.3 L13.5 14.6 L13.5 26.78 L3 20.48 Z" fill="#f8a830" stroke="#7a3aa0" stroke-width="0.6"/><path d="M24 8.3 L13.5 14.6 L13.5 26.78 L24 20.48 Z" fill="#f0c850" stroke="#7a3aa0" stroke-width="0.6"/><path d="M15 13 H24 L18 18 H24 L18 23 H24" fill="none" stroke="#fff" stroke-width="3"/><path d="M15 13 H24 L18 18 H24 L18 23 H24" fill="none" stroke="#333" stroke-width="1.2"/></svg>
<svg style="left:1811.5px;top:70.5px" width="31" height="31" viewBox="0 0 28 28"><path d="M3 8.3 L13.5 2 L24 8.3 L13.5 14.6 Z" fill="#c890f0" stroke="#7a3aa0" stroke-width="0.6"/><path d="M3 8.3 L13.5 14.6 L13.5 26.78 L3 20.48 Z" fill="#f8a830" stroke="#7a3aa0" stroke-width="0.6"/><path d="M24 8.3 L13.5 14.6 L13.5 26.78 L24 20.48 Z" fill="#f0c850" stroke="#7a3aa0" stroke-width="0.6"/><path d="M11 12 L23 24 M23 12 L11 24" stroke="#333" stroke-width="2.2"/></svg>
<svg style="left:1850.5px;top:70.5px" width="31" height="31" viewBox="0 0 28 28"><path d="M3 8.3 L13.5 2 L24 8.3 L13.5 14.6 Z" fill="#c890f0" stroke="#7a3aa0" stroke-width="0.6"/><path d="M3 8.3 L13.5 14.6 L13.5 26.78 L3 20.48 Z" fill="#f8a830" stroke="#7a3aa0" stroke-width="0.6"/><path d="M24 8.3 L13.5 14.6 L13.5 26.78 L24 20.48 Z" fill="#f0c850" stroke="#7a3aa0" stroke-width="0.6"/><rect x="13" y="13" width="10" height="10" fill="#fff" stroke="#222" stroke-width="1.5"/><rect x="16" y="16" width="5" height="5" fill="none" stroke="#222"/><circle cx="13" cy="23" r="1.3" fill="#2a3ac0"/><circle cx="23" cy="13" r="1.3" fill="#2a3ac0"/></svg>
<div class="t" style="left:52px;top:78px;font-size:16px;color:#111">启动</div>
<svg style="left:88px;top:84px" width="8" height="5" viewBox="0 0 8 5"><path d="M0 0 H8 L4 4.5 Z" fill="#111"/></svg>
<svg style="left:476px;top:84px" width="8" height="5" viewBox="0 0 8 5"><path d="M0 0 H8 L4 4.5 Z" fill="#111"/></svg>
<svg style="left:782px;top:84px" width="8" height="5" viewBox="0 0 8 5"><path d="M0 0 H8 L4 4.5 Z" fill="#111"/></svg>
<svg style="left:837px;top:84px" width="8" height="5" viewBox="0 0 8 5"><path d="M0 0 H8 L4 4.5 Z" fill="#111"/></svg>
<svg style="left:892px;top:84px" width="8" height="5" viewBox="0 0 8 5"><path d="M0 0 H8 L4 4.5 Z" fill="#111"/></svg>
<svg style="left:1028px;top:84px" width="8" height="5" viewBox="0 0 8 5"><path d="M0 0 H8 L4 4.5 Z" fill="#111"/></svg>
<svg style="left:1475px;top:84px" width="8" height="5" viewBox="0 0 8 5"><path d="M0 0 H8 L4 4.5 Z" fill="#111"/></svg>
<svg style="left:1530px;top:84px" width="8" height="5" viewBox="0 0 8 5"><path d="M0 0 H8 L4 4.5 Z" fill="#111"/></svg>
<svg style="left:1262px;top:84px" width="8" height="5" viewBox="0 0 8 5"><path d="M0 0 H8 L4 4.5 Z" fill="#111"/></svg>
<svg style="left:1412px;top:84px" width="8" height="5" viewBox="0 0 8 5"><path d="M0 0 H8 L4 4.5 Z" fill="#111"/></svg>
<svg style="left:713px;top:94px" width="8" height="5" viewBox="0 0 8 5"><path d="M0 0 H8 L4 4.5 Z" fill="#111"/></svg>
<svg style="left:1089px;top:94px" width="8" height="5" viewBox="0 0 8 5"><path d="M0 0 H8 L4 4.5 Z" fill="#111"/></svg>
<svg style="left:1584px;top:94px" width="8" height="5" viewBox="0 0 8 5"><path d="M0 0 H8 L4 4.5 Z" fill="#111"/></svg>
<svg style="left:1890px;top:94px" width="8" height="5" viewBox="0 0 8 5"><path d="M0 0 H8 L4 4.5 Z" fill="#111"/></svg>
<div class="a" style="left:262px;top:67px;width:2px;height:38px;background:#b8b8b8;border-right:1px solid #ececec"></div>
<div class="a" style="left:427px;top:67px;width:2px;height:38px;background:#b8b8b8;border-right:1px solid #ececec"></div>
<div class="a" style="left:530px;top:67px;width:2px;height:38px;background:#b8b8b8;border-right:1px solid #ececec"></div>
<div class="a" style="left:618px;top:67px;width:2px;height:38px;background:#b8b8b8;border-right:1px solid #ececec"></div>
<div class="a" style="left:665px;top:67px;width:2px;height:38px;background:#b8b8b8;border-right:1px solid #ececec"></div>
<div class="a" style="left:728px;top:67px;width:2px;height:38px;background:#b8b8b8;border-right:1px solid #ececec"></div>
<div class="a" style="left:1040px;top:67px;width:2px;height:38px;background:#b8b8b8;border-right:1px solid #ececec"></div>
<div class="a" style="left:1103px;top:67px;width:2px;height:38px;background:#b8b8b8;border-right:1px solid #ececec"></div>
<div class="a" style="left:1277px;top:67px;width:2px;height:38px;background:#b8b8b8;border-right:1px solid #ececec"></div>
<div class="a" style="left:1363px;top:67px;width:2px;height:38px;background:#b8b8b8;border-right:1px solid #ececec"></div>
<div class="a" style="left:1426px;top:67px;width:2px;height:38px;background:#b8b8b8;border-right:1px solid #ececec"></div>
<div class="a" style="left:1598px;top:67px;width:2px;height:38px;background:#b8b8b8;border-right:1px solid #ececec"></div>
<div class="a" style="left:9px;top:68px;width:3px;height:36px;background:repeating-linear-gradient(#888 0 1px,#fff 1px 2px,transparent 2px 4px)"></div>
<div class="a" style="left:734px;top:68px;width:3px;height:36px;background:repeating-linear-gradient(#888 0 1px,#fff 1px 2px,transparent 2px 4px)"></div>
<div class="a" style="left:1110px;top:68px;width:3px;height:36px;background:repeating-linear-gradient(#888 0 1px,#fff 1px 2px,transparent 2px 4px)"></div>
<div class="a" style="left:1605px;top:68px;width:3px;height:36px;background:repeating-linear-gradient(#888 0 1px,#fff 1px 2px,transparent 2px 4px)"></div>
<div class="a" style="left:1118px;top:75px;width:55px;height:22px;background:#fff;border:1px solid #7a8aa0;border-radius:3px"></div>
<div class="t" style="left:1120px;top:78px;font-size:15px;color:#111">254</div>
<div class="a" style="left:1152px;top:76px;width:20px;height:20px;background:linear-gradient(#a8c8f0,#5a8ad0);border-left:1px solid #7a8aa0;border-radius:0 2px 2px 0"></div>
<svg style="left:1155px;top:81px" width="14" height="10" viewBox="0 0 14 10"><path d="M1 1 H13 L7 9 Z" fill="#111" stroke="#fff" stroke-width="0.8"/></svg>
<div class="a" style="left:181px;top:112px;width:38px;height:37px;background:#fbfbfb;border:1px solid #8a8a8a;border-radius:3px"></div>
<svg style="left:16.5px;top:114.5px" width="31" height="31" viewBox="0 0 28 28"><path d="M4 7 L12 3 L18 6 L18 14 L25 17 L25 23 L15 27 L4 22 Z" fill="#4a80f0" stroke="#1a3aa0" stroke-width="1.1"/><path d="M4 7 L10 10 L10 18 L15 21 L15 27" fill="none" stroke="#1a3aa0" stroke-width="1"/><path d="M10 10 L18 6 M10 18 L18 14" stroke="#b8d0ff" stroke-width="1"/><path d="M15 21 L25 17" stroke="#b8d0ff" stroke-width="1"/></svg>
<svg style="left:56.5px;top:114.5px" width="31" height="31" viewBox="0 0 28 28"><path d="M9 9 L16 4 L23 8 L20 11 L26 14 L19 20 Z" fill="#fff" stroke="#2a3aa0" stroke-width="1.6"/><path d="M9 9 L19 20 L19 22 L9 11 Z" fill="#8a9ae8"/><path d="M5 17 L24 26" stroke="#c8d040" stroke-width="3"/><path d="M2 19 L7 14" stroke="#111" stroke-width="2.4"/></svg>
<svg style="left:95.5px;top:114.5px" width="31" height="31" viewBox="0 0 28 28"><rect x="7" y="3" width="6" height="20" rx="1.5" fill="#4a5ad8" stroke="#22307a" stroke-width="0.7"/><path d="M8 7 L12 9 M8 12 L12 14 M8 17 L12 19" stroke="#c8d0ff" stroke-width="1"/><path d="M14 10 L26 8 M14 13 L25 11 M14 16 L23 15" stroke="#555" stroke-width="1.4"/><polygon points="13.0,24.0 11.2,24.5 12.1,26.1 10.5,25.2 10.0,27.0 9.5,25.2 7.9,26.1 8.8,24.5 7.0,24.0 8.8,23.5 7.9,21.9 9.5,22.8 10.0,21.0 10.5,22.8 12.1,21.9 11.2,23.5" fill="#f6ee3a" stroke="#b8a010" stroke-width="0.5"/></svg>
<svg style="left:142.5px;top:114.5px" width="31" height="31" viewBox="0 0 28 28"><path d="M3 8 L9 4 L25 4 L21 9 Z" fill="#f8e070" stroke="#b08010" stroke-width="0.7"/><path d="M3 8 L21 9 L21 13 L3 12 Z" fill="#f0c030" stroke="#b08010" stroke-width="0.7"/><path d="M21 9 L25 4 L25 8 L21 13 Z" fill="#d8a020"/><path d="M10 6 L16 6 L14 9 L9 8 Z" fill="#f06020"/><path d="M10 12 V17 M18 12 V17" stroke="#e8b030" stroke-width="2"/><path d="M3 19 L9 15 L25 15 L21 20 Z" fill="#f8e070" stroke="#b08010" stroke-width="0.7"/><path d="M3 19 L21 20 L21 25 L3 24 Z" fill="#f0c030" stroke="#b08010" stroke-width="0.7"/><path d="M21 20 L25 15 L25 20 L21 25 Z" fill="#d8a020"/></svg>
<svg style="left:183.5px;top:114.5px" width="31" height="31" viewBox="0 0 28 28"><path d="M10 2 H19 V11 L14.5 18 L10 11 Z" fill="#4a50d8" stroke="#1a2a8a" stroke-width="0.8"/><path d="M12 3 V11" stroke="#a8b0ff" stroke-width="1.5"/><path d="M2 20 L10 20 L14.5 25 L19 20 L27 20" fill="none" stroke="#111" stroke-width="1.4"/><path d="M3 27 L6 22 M7 27 L10 22 M18 27 L21 22 M22 27 L25 22" stroke="#555" stroke-width="0.9"/><path d="M11 15 L16 21 M17 14 L12 20 M10 18 L18 18" stroke="#f08030" stroke-width="1.3"/></svg>
<svg style="left:231.5px;top:114.5px" width="31" height="31" viewBox="0 0 28 28"><path d="M3 25 H10 V3 H17 V25 H25" fill="none" stroke="#111" stroke-width="1.4"/><path d="M10 5 L19 2 L19 27 L10 25 Z" fill="#4a5ad8"/><path d="M10 5 L13 4 L13 26 L10 25 Z" fill="#fff"/></svg>
<svg style="left:299.5px;top:114.5px" width="31" height="31" viewBox="0 0 28 28"><rect x="3" y="10" width="14" height="11" fill="#e8e8ff" stroke="#333" stroke-width="1"/><rect x="8" y="14" width="17" height="12" fill="#c8d8ff" stroke="#333" stroke-width="1"/><path d="M8 18 H25 M8 22 H25 M12 14 V26 M16 14 V26 M20 14 V26" stroke="#3a5ab8" stroke-width="0.8"/><polygon points="25.5,7.0 22.3,7.9 23.9,10.9 20.9,9.3 20.0,12.5 19.1,9.3 16.1,10.9 17.7,7.9 14.5,7.0 17.7,6.1 16.1,3.1 19.1,4.7 20.0,1.5 20.9,4.7 23.9,3.1 22.3,6.1" fill="#f6ee3a" stroke="#b8a010" stroke-width="0.5"/></svg>
<svg style="left:339.5px;top:114.5px" width="31" height="31" viewBox="0 0 28 28"><rect x="5" y="6" width="6" height="20" rx="1.5" fill="#4a5ad8" stroke="#22307a" stroke-width="0.7"/><path d="M6 10 L10 12 M6 15 L10 17 M6 20 L10 22" stroke="#c8d0ff" stroke-width="1"/><rect x="17" y="4" width="7" height="14" fill="#222"/><rect x="15" y="14" width="7" height="6" fill="#f0c030" stroke="#222"/><polygon points="25.5,7.0 22.3,7.9 23.9,10.9 20.9,9.3 20.0,12.5 19.1,9.3 16.1,10.9 17.7,7.9 14.5,7.0 17.7,6.1 16.1,3.1 19.1,4.7 20.0,1.5 20.9,4.7 23.9,3.1 22.3,6.1" fill="#f6ee3a" stroke="#b8a010" stroke-width="0.5"/></svg>
<svg style="left:379.5px;top:114.5px" width="31" height="31" viewBox="0 0 28 28"><path d="M8 12.1 L16.5 7 L25 12.1 L16.5 17.2 Z" fill="#a8c0ff" stroke="none" stroke-width="0.8"/><path d="M8 12.1 L16.5 17.2 L16.5 27.06 L8 21.96 Z" fill="#6a8aff" stroke="none" stroke-width="0.8"/><path d="M25 12.1 L16.5 17.2 L16.5 27.06 L25 21.96 Z" fill="#2a4ad8" stroke="none" stroke-width="0.8"/><circle cx="7" cy="22" r="4" fill="#f06020"/><circle cx="12" cy="23" r="3" fill="#f8a020"/><polygon points="25.5,7.0 22.3,7.9 23.9,10.9 20.9,9.3 20.0,12.5 19.1,9.3 16.1,10.9 17.7,7.9 14.5,7.0 17.7,6.1 16.1,3.1 19.1,4.7 20.0,1.5 20.9,4.7 23.9,3.1 22.3,6.1" fill="#f6ee3a" stroke="#b8a010" stroke-width="0.5"/></svg>
<svg style="left:419.5px;top:114.5px" width="31" height="31" viewBox="0 0 28 28"><path d="M3 9 V25 H25 V9" fill="#d8f0ff" stroke="#3a6ab8" stroke-width="1.4"/><path d="M4 15 Q7 12 10 15 Q13 18 16 15 Q19 12 22 15 Q24 17 25 15 M4 20 Q7 17 10 20 Q13 23 16 20 Q19 17 22 20" fill="none" stroke="#3a6ab8" stroke-width="1.3"/><polygon points="25.5,7.0 22.3,7.9 23.9,10.9 20.9,9.3 20.0,12.5 19.1,9.3 16.1,10.9 17.7,7.9 14.5,7.0 17.7,6.1 16.1,3.1 19.1,4.7 20.0,1.5 20.9,4.7 23.9,3.1 22.3,6.1" fill="#f6ee3a" stroke="#b8a010" stroke-width="0.5"/></svg>
<svg style="left:458.5px;top:114.5px" width="31" height="31" viewBox="0 0 28 28"><rect x="5" y="7" width="6" height="19" rx="1.5" fill="#4a5ad8" stroke="#22307a" stroke-width="0.7"/><path d="M6 11 L10 13 M6 16 L10 18 M6 21 L10 23" stroke="#c8d0ff" stroke-width="1"/><path d="M12 14 L24 12 M12 17 L23 15 M12 20 L21 19" stroke="#555" stroke-width="1.4"/><polygon points="25.5,7.0 22.3,7.9 23.9,10.9 20.9,9.3 20.0,12.5 19.1,9.3 16.1,10.9 17.7,7.9 14.5,7.0 17.7,6.1 16.1,3.1 19.1,4.7 20.0,1.5 20.9,4.7 23.9,3.1 22.3,6.1" fill="#f6ee3a" stroke="#b8a010" stroke-width="0.5"/></svg>
<svg style="left:525.5px;top:114.5px" width="31" height="31" viewBox="0 0 28 28"><rect x="3" y="3" width="6" height="19" rx="1.5" fill="#4a5ad8" stroke="#22307a" stroke-width="0.7"/><path d="M4 7 L8 9 M4 12 L8 14 M4 17 L8 19" stroke="#c8d0ff" stroke-width="1"/><path d="M10 9 L22 7 M10 12 L21 10 M10 15 L19 14" stroke="#777" stroke-width="1.4"/><path d="M12 26 L22 16 M20 13 Q26 12 25 18 M9 23 Q8 27 13 27" fill="none" stroke="#e8c030" stroke-width="3"/></svg>
<svg style="left:565.5px;top:114.5px" width="31" height="31" viewBox="0 0 28 28"><rect x="3" y="3" width="6" height="19" rx="1.5" fill="#4a5ad8" stroke="#22307a" stroke-width="0.7"/><path d="M4 7 L8 9 M4 12 L8 14 M4 17 L8 19" stroke="#c8d0ff" stroke-width="1"/><path d="M10 9 L22 7 M10 12 L21 10 M10 15 L19 14" stroke="#777" stroke-width="1.4"/><path d="M11 26 L24 14 M11 14 L24 26" stroke="#c8b030" stroke-width="2.4"/></svg>
<svg style="left:604.5px;top:114.5px" width="31" height="31" viewBox="0 0 28 28"><rect x="3" y="3" width="6" height="19" rx="1.5" fill="#4a5ad8" stroke="#22307a" stroke-width="0.7"/><path d="M4 7 L8 9 M4 12 L8 14 M4 17 L8 19" stroke="#c8d0ff" stroke-width="1"/><path d="M10 9 L22 7 M10 12 L21 10 M10 15 L19 14" stroke="#777" stroke-width="1.4"/><path d="M11 12 L15 12 L20 17 L20 24 L11 24 Z" fill="#fff" stroke="#3a4ab0" stroke-width="1.2"/><path d="M15 12 L15 17 L20 17" fill="none" stroke="#3a4ab0" stroke-width="1"/><path d="M16 16 L20 16 L25 21 L25 27 L16 27 Z" fill="#fff" stroke="#3a4ab0" stroke-width="1.2"/><path d="M20 16 L20 21 L25 21" fill="none" stroke="#3a4ab0" stroke-width="1"/></svg>
<svg style="left:645.5px;top:114.5px" width="31" height="31" viewBox="0 0 28 28"><rect x="3" y="3" width="6" height="19" rx="1.5" fill="#a0a0a0" stroke="#22307a" stroke-width="0.7"/><path d="M4 7 L8 9 M4 12 L8 14 M4 17 L8 19" stroke="#c8d0ff" stroke-width="1"/><path d="M10 9 L22 7 M10 12 L21 10 M10 15 L19 14" stroke="#777" stroke-width="1.4"/><rect x="10" y="13" width="11" height="11" fill="#aaa"/><rect x="14" y="17" width="11" height="10" fill="#999"/></svg>
<svg style="left:685.5px;top:114.5px" width="31" height="31" viewBox="0 0 28 28"><rect x="4" y="6" width="20" height="18" rx="2" fill="#a0a0a0" stroke="#888"/><rect x="8" y="3" width="12" height="6" fill="#909090"/><path d="M7 14 H21 M7 18 H21" stroke="#bbb"/></svg>
<svg style="left:725.5px;top:114.5px" width="31" height="31" viewBox="0 0 28 28"><rect x="3" y="3" width="6" height="19" rx="1.5" fill="#4a5ad8" stroke="#22307a" stroke-width="0.7"/><path d="M4 7 L8 9 M4 12 L8 14 M4 17 L8 19" stroke="#c8d0ff" stroke-width="1"/><path d="M10 9 L22 7 M10 12 L21 10 M10 15 L19 14" stroke="#777" stroke-width="1.4"/><rect x="8" y="18" width="18" height="9" fill="#fff" stroke="#2a2a9a" stroke-width="1.5"/><text x="17" y="25.5" font-size="6.5" font-weight="bold" text-anchor="middle" fill="#2a2a9a" font-family="Liberation Sans">ABC</text><path d="M14 17 L25 4 L27 6 L17 18 Z" fill="#f0c030" stroke="#a07010" stroke-width="0.6"/></svg>
<svg style="left:764.5px;top:114.5px" width="31" height="31" viewBox="0 0 28 28"><rect x="3" y="3" width="6" height="19" rx="1.5" fill="#4a5ad8" stroke="#22307a" stroke-width="0.7"/><path d="M4 7 L8 9 M4 12 L8 14 M4 17 L8 19" stroke="#c8d0ff" stroke-width="1"/><path d="M10 9 L22 7 M10 12 L21 10 M10 15 L19 14" stroke="#777" stroke-width="1.4"/><path d="M13 15 L25 27 M25 15 L13 27" stroke="#222" stroke-width="2.4"/></svg>
<svg style="left:804.5px;top:114.5px" width="31" height="31" viewBox="0 0 28 28"><rect x="6" y="2" width="6" height="12" rx="1.5" fill="#4a5ad8" stroke="#22307a" stroke-width="0.7"/><path d="M7 6 L11 8 M7 11 L11 13 M7 16 L11 18" stroke="#c8d0ff" stroke-width="1"/><rect x="15" y="13" width="6" height="14" rx="1.5" fill="#4a5ad8" stroke="#22307a" stroke-width="0.7"/><path d="M16 17 L20 19 M16 22 L20 24 M16 27 L20 29" stroke="#c8d0ff" stroke-width="1"/><path d="M11 8 L24 8 M3 22 L14 22" stroke="#e04020" stroke-width="1.6"/><path d="M3 19 L3 25 L0 22 Z" fill="#f08030"/></svg>
<svg style="left:844.5px;top:114.5px" width="31" height="31" viewBox="0 0 28 28"><rect x="3" y="3" width="6" height="19" rx="1.5" fill="#4a5ad8" stroke="#22307a" stroke-width="0.7"/><path d="M4 7 L8 9 M4 12 L8 14 M4 17 L8 19" stroke="#c8d0ff" stroke-width="1"/><path d="M10 9 L22 7 M10 12 L21 10 M10 15 L19 14" stroke="#777" stroke-width="1.4"/><rect x="11" y="11" width="15" height="15" fill="#fff" stroke="#3a4ab0" stroke-width="1.3"/><path d="M14 15 H23 M14 18.5 H23 M14 22 H23" stroke="#3a4ab0" stroke-width="1.3"/></svg>
<svg style="left:884.5px;top:114.5px" width="31" height="31" viewBox="0 0 28 28"><rect x="3" y="3" width="6" height="19" rx="1.5" fill="#4a5ad8" stroke="#22307a" stroke-width="0.7"/><path d="M4 7 L8 9 M4 12 L8 14 M4 17 L8 19" stroke="#c8d0ff" stroke-width="1"/><path d="M10 9 L22 7 M10 12 L21 10 M10 15 L19 14" stroke="#777" stroke-width="1.4"/><rect x="12" y="13" width="13" height="13" fill="#fff" stroke="#2a2a9a" stroke-width="1.5"/><rect x="17" y="15" width="3" height="2" fill="#111"/><rect x="17" y="18" width="3" height="6" fill="#111"/></svg>
<svg style="left:924.5px;top:114.5px" width="31" height="31" viewBox="0 0 28 28"><path d="M3 4 L9 2 L14 10 L10 13 Z" fill="#3a70e0"/><rect x="13" y="11" width="6" height="15" rx="1.5" fill="#4a5ad8" stroke="#22307a" stroke-width="0.7"/><path d="M14 15 L18 17 M14 20 L18 22 M14 25 L18 27" stroke="#c8d0ff" stroke-width="1"/><path d="M19 18 L31 16 M19 21 L30 19 M19 24 L28 23" stroke="#555" stroke-width="1.4"/></svg>
<svg style="left:991.5px;top:114.5px" width="31" height="31" viewBox="0 0 28 28"><path d="M4 24 L24 4" stroke="#222" stroke-width="1.3"/><circle cx="4" cy="24" r="2.5" fill="#d81c1c"/><circle cx="24" cy="4" r="2.5" fill="#d81c1c"/></svg>
<svg style="left:1031.5px;top:114.5px" width="31" height="31" viewBox="0 0 28 28"><path d="M4 5 Q20 5 24 24" fill="none" stroke="#222" stroke-width="1.5"/><circle cx="4" cy="5" r="2.5" fill="#d81c1c"/><circle cx="18" cy="11" r="2.5" fill="#d81c1c"/><circle cx="24" cy="24" r="2.5" fill="#d81c1c"/></svg>
<svg style="left:1071.5px;top:114.5px" width="31" height="31" viewBox="0 0 28 28"><circle cx="10" cy="11" r="7" fill="none" stroke="#7a3ab0" stroke-width="1.3"/><circle cx="10" cy="11" r="1.8" fill="#d81c1c"/><ellipse cx="20" cy="9" rx="4" ry="6" fill="none" stroke="#d0b020" stroke-width="2"/><ellipse cx="22" cy="15" rx="4" ry="6" fill="none" stroke="#d0b020" stroke-width="2"/><path d="M3 21 L17 26" stroke="#7a3ab0" stroke-width="1.2"/><circle cx="4" cy="21" r="1.6" fill="#d81c1c"/><circle cx="17" cy="26" r="1.6" fill="#d81c1c"/></svg>
<svg style="left:1111.5px;top:114.5px" width="31" height="31" viewBox="0 0 28 28"><rect x="4" y="7" width="20" height="15" fill="none" stroke="#222" stroke-width="1.6"/><circle cx="4" cy="7" r="2.3" fill="#d81c1c"/><circle cx="24" cy="22" r="2.3" fill="#d81c1c"/></svg>
<svg style="left:1151.5px;top:114.5px" width="31" height="31" viewBox="0 0 28 28"><path d="M5 9 Q14 2 24 8 L26 22 Q17 16 9 23 Z" fill="#b8d0f0" stroke="#3a6ab8" stroke-width="1.2"/><circle cx="7" cy="10" r="2.3" fill="#d81c1c"/><circle cx="22" cy="8" r="2.3" fill="#d81c1c"/><circle cx="11" cy="21" r="2.3" fill="#d81c1c"/></svg>
<svg style="left:1191.5px;top:114.5px" width="31" height="31" viewBox="0 0 28 28"><path d="M3 20 L10 10 L17 22 L25 14" fill="none" stroke="#888" stroke-width="1.4"/><circle cx="10" cy="6" r="2.2" fill="#888"/><circle cx="10" cy="14" r="2.2" fill="#d81c1c"/><circle cx="17" cy="20" r="2.2" fill="#d81c1c"/><circle cx="25" cy="14" r="2.2" fill="#888"/></svg>
<svg style="left:1230.5px;top:114.5px" width="31" height="31" viewBox="0 0 28 28"><text x="14" y="25" font-size="25" font-family="Liberation Serif" font-weight="bold" text-anchor="middle" fill="#111">A</text></svg>
<svg style="left:1270.5px;top:114.5px" width="31" height="31" viewBox="0 0 28 28"><path d="M5 10 Q5 3 12 5 L14 8 Q18 3 23 8 Q26 13 19 20 L14 25 L5 25 Z" fill="#fff" stroke="#444" stroke-width="1.6"/><path d="M8 11 Q8 7 12 8 L14 11 Q17 7 20 10 Q22 13 17 18 L13 22 L8 22 Z" fill="none" stroke="#d82a2a" stroke-width="1.2"/></svg>
<svg style="left:1309.5px;top:114.5px" width="31" height="31" viewBox="0 0 28 28"><path d="M3 12 Q14 4 24 9 L26 20 Q16 15 7 22 Z" fill="#c8d8ff" stroke="#2a4ab8" stroke-width="1.3"/><path d="M10 10 L18 17 M14 14 L19 11" stroke="#e02020" stroke-width="1.4"/></svg>
<svg style="left:1349.5px;top:114.5px" width="31" height="31" viewBox="0 0 28 28"><path d="M8 4 Q2 8 6 12 M4 22 Q8 26 14 25 L22 21 Q26 20 25 16" fill="none" stroke="#222" stroke-width="1.6"/><path d="M12 12 V18" stroke="#f08020" stroke-width="3"/><path d="M9 17 L15 17 L12 21 Z" fill="#f08020"/><path d="M10 25 L24 19" stroke="#e02020" stroke-width="1.2"/><path d="M16 8 V24" stroke="#2a3ac0" stroke-dasharray="1.5 1.5"/></svg>
<svg style="left:1389.5px;top:114.5px" width="31" height="31" viewBox="0 0 28 28"><path d="M5 6 Q2 11 8 12 L15 12 Q22 11 25 9 M3 21 Q8 26 14 22 Q20 18 25 22" fill="none" stroke="#222" stroke-width="1.6"/><path d="M14 9 V16" stroke="#f08020" stroke-width="3"/><path d="M11 15 L17 15 L14 19 Z" fill="#f08020"/></svg>
<svg style="left:1429.5px;top:114.5px" width="31" height="31" viewBox="0 0 28 28"><path d="M3 4 L10 2 L10 22 L3 24 Z" fill="#f8f0c0" stroke="#c0a040" stroke-width="0.8"/><path d="M10 5 L20 3 L25 8 L25 25 L10 25 Z" fill="#f8d880" stroke="#c0a040" stroke-width="0.8"/><circle cx="17" cy="19" r="2.5" fill="none" stroke="#e02020" stroke-width="1.2"/><path d="M15 12 V16 H21" stroke="#e02020" fill="none"/></svg>
<svg style="left:1469.5px;top:114.5px" width="31" height="31" viewBox="0 0 28 28"><path d="M2 14 L12 6 L26 14 L16 22 Z" fill="#d8e8ff" stroke="#3a5ab8" stroke-width="1.2"/><path d="M10 3 L17 6 L17 26 L10 23 Z" fill="#c0d8f8" stroke="#3a5ab8" stroke-width="1" opacity="0.8"/><path d="M6 17 Q13 8 22 10" stroke="#e02020" fill="none" stroke-width="1.3"/></svg>
<svg style="left:1509.5px;top:114.5px" width="31" height="31" viewBox="0 0 28 28"><rect x="3" y="6" width="11" height="19" rx="2" fill="#a8c0f0" stroke="#3a5ab8" stroke-width="1"/><ellipse cx="8.5" cy="6" rx="5.5" ry="2.5" fill="#d8e8ff" stroke="#3a5ab8"/><path d="M12 15 H21" stroke="#f08020" stroke-width="2.5"/><path d="M19 11 L24 15 L19 19 Z" fill="#f08020"/><path d="M22 4 Q28 15 22 26" fill="none" stroke="#e02020" stroke-width="1.5"/></svg>
<svg style="left:1577.5px;top:114.5px" width="31" height="31" viewBox="0 0 28 28"><path d="M12 2 L20 2 L25 7 L25 18 L12 18 Z" fill="#fff" stroke="#6a6ab0" stroke-width="1.2"/><path d="M20 2 L20 7 L25 7" fill="none" stroke="#6a6ab0" stroke-width="1"/><path d="M15 8 H22 M15 11 H22 M15 14 H22" stroke="#e06060"/><path d="M4 26 L13 17" stroke="#e8c030" stroke-width="3"/><circle cx="14" cy="15" r="4" fill="none" stroke="#e8c030" stroke-width="2.5"/></svg>
<svg style="left:1616.5px;top:114.5px" width="31" height="31" viewBox="0 0 28 28"><path d="M3 14 H25" stroke="#222" stroke-width="1.6"/><path d="M12 4 Q20 4 20 14 Q20 22 14 24" fill="none" stroke="#222" stroke-width="1.6"/><path d="M3 25 Q8 18 16 17" fill="none" stroke="#999" stroke-dasharray="2 1.5"/><path d="M13 8 L24 21" stroke="#e02a2a" stroke-width="1.6"/></svg>
<svg style="left:1656.5px;top:114.5px" width="31" height="31" viewBox="0 0 28 28"><path d="M3 13 H18 M14 3 V26" stroke="#222" stroke-width="1.6"/><path d="M18 13 H26 M14 3 V0" stroke="#999" stroke-dasharray="1.5 1.5"/><path d="M9 6 L22 20" stroke="#e02a2a" stroke-width="1.6"/></svg>
<svg style="left:1696.5px;top:114.5px" width="31" height="31" viewBox="0 0 28 28"><path d="M3 25 Q10 25 13 15 Q16 4 25 5" fill="none" stroke="#333" stroke-width="1.8"/><path d="M10 6 L18 22" stroke="#e02a2a" stroke-width="1.6"/></svg>
<svg style="left:1736.5px;top:114.5px" width="31" height="31" viewBox="0 0 28 28"><path d="M3 4 H15 Q24 4 24 14 V25" fill="none" stroke="#222" stroke-width="1.8"/><path d="M16 4 Q24 5 24 14" fill="none" stroke="#e02a2a" stroke-width="1.6"/><path d="M24 4 V12" stroke="#999" stroke-dasharray="1.5 1.5"/></svg>
<svg style="left:1776.5px;top:114.5px" width="31" height="31" viewBox="0 0 28 28"><path d="M4 3 H17 L25 11 V25 H4 Z" fill="#fff" stroke="#3a3a9a" stroke-width="1.5"/><path d="M5 4 L16 16 V22" stroke="#888" stroke-dasharray="1.5 1.5" fill="none"/><path d="M16 19 H22" stroke="#f08020" stroke-width="2"/><path d="M20 16 L24 19 L20 22 Z" fill="#f08020"/></svg>
<svg style="left:1816.5px;top:114.5px" width="31" height="31" viewBox="0 0 28 28"><path d="M3 24 Q14 22 18 4" fill="none" stroke="#333" stroke-width="1.8"/><path d="M6 23 Q15 20 18 6" fill="none" stroke="#e02a2a" stroke-width="1.4"/><path d="M23 8 V20" stroke="#f08020" stroke-width="1.2"/><path d="M21 10 L23 6 L25 10 M21 18 L23 22 L25 18" fill="none" stroke="#e02a2a"/></svg>
<svg style="left:1853.5px;top:114.5px" width="31" height="31" viewBox="0 0 28 28"><path d="M3 12 Q8 4 14 9 Q20 12 26 4" fill="none" stroke="#333" stroke-width="1.6"/><path d="M2 24 Q12 15 26 22" fill="none" stroke="#e02a2a" stroke-width="1.8"/><path d="M13 13 V18" stroke="#f08020" stroke-width="2"/><path d="M10 17 L16 17 L13 21 Z" fill="#f08020"/></svg>
<svg style="left:270px;top:136px" width="8" height="5" viewBox="0 0 8 5"><path d="M0 0 H8 L4 4.5 Z" fill="#111"/></svg>
<svg style="left:497px;top:136px" width="8" height="5" viewBox="0 0 8 5"><path d="M0 0 H8 L4 4.5 Z" fill="#111"/></svg>
<svg style="left:963px;top:136px" width="8" height="5" viewBox="0 0 8 5"><path d="M0 0 H8 L4 4.5 Z" fill="#111"/></svg>
<svg style="left:1548px;top:136px" width="8" height="5" viewBox="0 0 8 5"><path d="M0 0 H8 L4 4.5 Z" fill="#111"/></svg>
<svg style="left:1894px;top:136px" width="8" height="5" viewBox="0 0 8 5"><path d="M0 0 H8 L4 4.5 Z" fill="#111"/></svg>
<div class="a" style="left:135px;top:111px;width:2px;height:38px;background:#b8b8b8;border-right:1px solid #ececec"></div>
<div class="a" style="left:222px;top:111px;width:2px;height:38px;background:#b8b8b8;border-right:1px solid #ececec"></div>
<div class="a" style="left:284px;top:111px;width:2px;height:38px;background:#b8b8b8;border-right:1px solid #ececec"></div>
<div class="a" style="left:511px;top:111px;width:2px;height:38px;background:#b8b8b8;border-right:1px solid #ececec"></div>
<div class="a" style="left:978px;top:111px;width:2px;height:38px;background:#b8b8b8;border-right:1px solid #ececec"></div>
<div class="a" style="left:1562px;top:111px;width:2px;height:38px;background:#b8b8b8;border-right:1px solid #ececec"></div>
<div class="a" style="left:9px;top:112px;width:3px;height:36px;background:repeating-linear-gradient(#888 0 1px,#fff 1px 2px,transparent 2px 4px)"></div>
<div class="a" style="left:291px;top:112px;width:3px;height:36px;background:repeating-linear-gradient(#888 0 1px,#fff 1px 2px,transparent 2px 4px)"></div>
<div class="a" style="left:518px;top:112px;width:3px;height:36px;background:repeating-linear-gradient(#888 0 1px,#fff 1px 2px,transparent 2px 4px)"></div>
<div class="a" style="left:985px;top:112px;width:3px;height:36px;background:repeating-linear-gradient(#888 0 1px,#fff 1px 2px,transparent 2px 4px)"></div>
<div class="a" style="left:1570px;top:112px;width:3px;height:36px;background:repeating-linear-gradient(#888 0 1px,#fff 1px 2px,transparent 2px 4px)"></div>
<svg style="left:17.5px;top:157.5px" width="31" height="31" viewBox="0 0 28 28"><path d="M11 17 V3 M11 17 L24 17" stroke="#e02a2a" stroke-width="1.8"/><path d="M8 6 L11 2 L14 6 Z M21 14 L25 17 L21 20 Z" fill="#e02a2a"/><path d="M11 17 L4 24" stroke="#20a040" stroke-width="1.8"/><path d="M5 13 V25 H9" stroke="#2a4ad0" stroke-width="1.6" fill="none"/><path d="M3 9 L8 4" stroke="#f08030" stroke-width="1.5"/><text x="19" y="27" font-size="8" font-weight="bold" fill="#1a1a5a" text-anchor="middle" font-family="Liberation Sans">ABS</text></svg>
<svg style="left:55.5px;top:157.5px" width="31" height="31" viewBox="0 0 28 28"><path d="M5 6 L17 18 M17 6 L5 18" stroke="#222" stroke-width="2.4"/><path d="M21 3 H24 V21 H21 M3 24 H20 M3 22 V26 M20 22 V26" fill="none" stroke="#333" stroke-width="1"/><circle cx="11" cy="26" r="1.2" fill="#d81c1c"/><circle cx="26" cy="12" r="1.2" fill="#d81c1c"/></svg>
<svg style="left:95.5px;top:157.5px" width="31" height="31" viewBox="0 0 28 28"><path d="M3 14 L13 5 L13 10 L25 10 L25 18 L13 18 L13 23 Z" fill="#b8a0f0" stroke="#8a70d0" stroke-width="1"/></svg>
<svg style="left:134.5px;top:157.5px" width="31" height="31" viewBox="0 0 28 28"><path d="M25 14 L15 5 L15 10 L3 10 L3 18 L15 18 L15 23 Z" fill="#a098f0" stroke="#7a70d0" stroke-width="1"/></svg>
<svg style="left:175.5px;top:157.5px" width="31" height="31" viewBox="0 0 28 28"><path d="M14 5 L23 14 L14 23 L5 14 Z" fill="#d0d8ff" stroke="#2a3a9a" stroke-width="2"/><path d="M11 14 L15 10 L15 18 Z" fill="#2a3a9a"/><path d="M20 3 Q25 6 24 10 M4 18 Q3 23 8 25" fill="none" stroke="#4a70e0" stroke-width="1.6" stroke-dasharray="2 1.5"/></svg>
<svg style="left:216.5px;top:157.5px" width="31" height="31" viewBox="0 0 28 28"><rect x="15" y="3" width="10" height="9" fill="#fff" stroke="#333" stroke-width="1.2"/><rect x="3" y="16" width="10" height="9" fill="#fff" stroke="#333" stroke-width="1.2"/><path d="M9 14 L15 9" stroke="#f08020" stroke-width="2"/></svg>
<svg style="left:254.5px;top:157.5px" width="31" height="31" viewBox="0 0 28 28"><rect x="10" y="10" width="9" height="10" fill="#4a6ae0" stroke="#1a3aa0" stroke-width="1"/><rect x="4" y="20" width="21" height="6" fill="#4a6ae0" stroke="#1a3aa0" stroke-width="1"/><path d="M14 9 V2 M14 4 L21 4" stroke="#e03a2a" stroke-width="1.3"/></svg>
<svg style="left:294.5px;top:157.5px" width="31" height="31" viewBox="0 0 28 28"><path d="M3 9.399999999999999 L12.0 4 L21 9.399999999999999 L12.0 14.799999999999999 Z" fill="#d8b0ff" stroke="none" stroke-width="0.8"/><path d="M3 9.399999999999999 L12.0 14.799999999999999 L12.0 25.24 L3 19.84 Z" fill="#a060e8" stroke="none" stroke-width="0.8"/><path d="M21 9.399999999999999 L12.0 14.799999999999999 L12.0 25.24 L21 19.84 Z" fill="#7a3ac8" stroke="none" stroke-width="0.8"/><path d="M22 6 V22 M20 6 H24 M20 22 H24" stroke="#e06060" stroke-width="1"/><rect x="2" y="23" width="22" height="4" fill="#e8d060"/></svg>
<svg style="left:334.5px;top:157.5px" width="31" height="31" viewBox="0 0 28 28"><rect x="2" y="3" width="23" height="23" fill="#fff" stroke="#111" stroke-width="1.6"/><path d="M2 3 L6 1 L27 1 L25 3 M25 26 L27 24 V1" fill="none" stroke="#111" stroke-width="1"/><path d="M6 8.8 L14.0 4 L22 8.8 L14.0 13.6 Z" fill="#d0a8ff" stroke="none" stroke-width="0.8"/><path d="M6 8.8 L14.0 13.6 L14.0 22.88 L6 18.08 Z" fill="#9a50e8" stroke="none" stroke-width="0.8"/><path d="M22 8.8 L14.0 13.6 L14.0 22.88 L22 18.08 Z" fill="#7030c0" stroke="none" stroke-width="0.8"/></svg>
<svg style="left:374.5px;top:157.5px" width="31" height="31" viewBox="0 0 28 28"><text x="17" y="11" font-size="11" font-weight="bold" fill="#2a3ac0" text-anchor="middle" font-family="Liberation Sans">R</text><path d="M5 14 Q6 25 15 25 Q23 24 24 15" fill="none" stroke="#e02a2a" stroke-width="2"/><path d="M13 3 L16 18" stroke="#666"/></svg>
<svg style="left:414.5px;top:157.5px" width="31" height="31" viewBox="0 0 28 28"><path d="M2 14 L14 6 L26 14 L14 22 Z" fill="#fff" stroke="#444" stroke-width="1.2"/><path d="M6 14 L14 9 L22 14 L14 19 Z M2 14 V19 L14 27 L26 19 V14" fill="none" stroke="#444" stroke-width="1"/><path d="M14 22 L10 27" stroke="#e02a2a"/></svg>
<svg style="left:454.5px;top:157.5px" width="31" height="31" viewBox="0 0 28 28"><path d="M3 16 Q10 10 16 16 Q22 20 26 14 L26 22 Q20 28 14 22 Q8 18 3 24 Z" fill="#88b8f0" stroke="#3a6ab8"/><path d="M15 3 V14" stroke="#f08020" stroke-width="2"/><path d="M12 6 L15 2 L18 6 Z" fill="#e02020"/><path d="M4 4 H26" stroke="#333"/></svg>
<svg style="left:493.5px;top:157.5px" width="31" height="31" viewBox="0 0 28 28"><path d="M2 17 L14 5 L26 13 L14 25 Z" fill="#222"/><path d="M4 15 L15 5 L18 7 L7 17 Z" fill="#f8e030"/><path d="M7 17 L18 7 L21 9 L10 19 Z" fill="#f08020"/><path d="M10 19 L21 9 L24 11 L13 21 Z" fill="#e02020"/></svg>
<svg style="left:534.5px;top:157.5px" width="31" height="31" viewBox="0 0 28 28"><rect x="14" y="3" width="10" height="20" rx="3" fill="#a8c8ff" stroke="#5a7ad8" stroke-width="0.8"/><rect x="3" y="15" width="10" height="10" rx="3" fill="#88b0f8" stroke="#5a7ad8" stroke-width="0.8"/><path d="M5 12 L11 6" stroke="#f08020" stroke-width="2"/></svg>
<svg style="left:573.5px;top:157.5px" width="31" height="31" viewBox="0 0 28 28"><path d="M3 7 L8 3 H25 V21 L21 25 H3 Z M3 7 H21 V25 M21 7 L25 3" fill="#fff" stroke="#333" stroke-width="1.2"/><path d="M7 10.5 L14.5 6 L22 10.5 L14.5 15.0 Z" fill="#ff8090" stroke="none" stroke-width="0.8"/><path d="M7 10.5 L14.5 15.0 L14.5 23.7 L7 19.2 Z" fill="#e01020" stroke="none" stroke-width="0.8"/><path d="M22 10.5 L14.5 15.0 L14.5 23.7 L22 19.2 Z" fill="#a00010" stroke="none" stroke-width="0.8"/></svg>
<svg style="left:613.5px;top:157.5px" width="31" height="31" viewBox="0 0 28 28"><path d="M13 2 L21 6 L21 26 L13 22 Z" fill="#f090c0" stroke="#d05090" stroke-width="0.6"/><path d="M3 16 L11 12 L25 17 L17 22 Z" fill="#fff" stroke="#888" stroke-width="1"/><path d="M3 16 V20 L17 26 L25 21 V17" fill="#f0f0f0" stroke="#888"/></svg>
<svg style="left:653.5px;top:157.5px" width="31" height="31" viewBox="0 0 28 28"><path d="M2 16 L7 11 L27 11 L22 16 Z" fill="#e8f4ff" stroke="#6a9ad0" stroke-width="0.8"/><rect x="2" y="16" width="20" height="11" fill="#b8dcf8" stroke="#6a9ad0" stroke-width="0.8"/><path d="M22 16 L27 11 L27 22 L22 27 Z" fill="#88bce8" stroke="#6a9ad0" stroke-width="0.8"/><path d="M13 5 V27" stroke="#e05050" stroke-width="1.2"/><path d="M6 7 H11 M15 7 H21" stroke="#e05050" stroke-width="2"/><path d="M9 5 L11 7 L9 9 M17 5 L15 7 L17 9" fill="none" stroke="#e05050"/></svg>
<svg style="left:692.5px;top:157.5px" width="31" height="31" viewBox="0 0 28 28"><path d="M3 16 L8 11 L27 11 L22 16 Z" fill="#e8f4ff" stroke="#6a9ad0" stroke-width="0.8"/><rect x="3" y="16" width="19" height="9" fill="#b8dcf8" stroke="#6a9ad0" stroke-width="0.8"/><path d="M22 16 L27 11 L27 20 L22 25 Z" fill="#88bce8" stroke="#6a9ad0" stroke-width="0.8"/><path d="M14 2 V27" stroke="#e05050" stroke-width="1.3"/><path d="M11 5 L14 1 L17 5 M11 24 L14 28 L17 24" fill="none" stroke="#e05050" stroke-width="1.3"/></svg>
<svg style="left:732.5px;top:157.5px" width="31" height="31" viewBox="0 0 28 28"><rect x="4" y="6" width="20" height="16" fill="none" stroke="#333" stroke-width="1.8"/></svg>
<svg style="left:788.5px;top:157.5px" width="31" height="31" viewBox="0 0 28 28"><path d="M8 4 H20 L26 14 L20 24 H8 L2 14 Z" fill="none" stroke="#3a4ad0" stroke-width="1.6"/></svg>
<svg style="left:841.5px;top:157.5px" width="31" height="31" viewBox="0 0 28 28"><path d="M6 22 V3 M6 22 L23 10 M6 22 L22 26" stroke="#2a4ad0" stroke-width="1.4"/><path d="M6 22 L22 12" stroke="#20b040" stroke-width="1.6"/><path d="M6 22 L21 26" stroke="#e02020" stroke-width="1.6"/><text x="12" y="7" font-size="7" font-weight="bold" fill="#222" font-family="Liberation Sans">Z</text><text x="22" y="12" font-size="7" font-weight="bold" fill="#222" font-family="Liberation Sans">Y</text><text x="22" y="28" font-size="7" font-weight="bold" fill="#222" font-family="Liberation Sans">X</text></svg>
<svg style="left:882.5px;top:157.5px" width="31" height="31" viewBox="0 0 28 28"><path d="M3 8 L12 3 L25 12 L25 22 L16 27 L3 18 Z M3 8 L16 17 L25 12 M16 17 V27" fill="none" stroke="#888" stroke-width="1" stroke-dasharray="2 1"/><path d="M3 8 L12 3 L25 12 L16 17 Z" fill="#f8d8e0" stroke="#e06070" stroke-width="1.2"/></svg>
<svg style="left:922.5px;top:157.5px" width="31" height="31" viewBox="0 0 28 28"><path d="M5 3 L17 11 L11 18 Z" fill="#6a8a40" stroke="#3a5a20"/><path d="M11 18 L17 11 L26 22 L20 26 Z" fill="#fff" stroke="#ccc"/><path d="M9 10 Q12 18 17 11" fill="#a8d060"/></svg>
<svg style="left:961.5px;top:157.5px" width="31" height="31" viewBox="0 0 28 28"><circle cx="14" cy="14" r="10" fill="none" stroke="#444" stroke-width="1.8"/></svg>
<svg style="left:1030.5px;top:157.5px" width="31" height="31" viewBox="0 0 28 28"><rect x="5" y="2" width="14" height="6" fill="#a8a0f0" stroke="#6a60c0"/><path d="M8 8 L12 14 L16 8" fill="#c060e0"/><path d="M12 26 L22 16 M20 13 Q26 12 25 18 M9 23 Q8 27 13 27" fill="none" stroke="#e8c030" stroke-width="3.2"/></svg>
<svg style="left:1073.5px;top:157.5px" width="31" height="31" viewBox="0 0 28 28"><text x="14" y="23" font-size="22" font-weight="bold" fill="#1a3ae8" text-anchor="middle">名</text></svg>
<svg style="left:1137.5px;top:157.5px" width="31" height="31" viewBox="0 0 28 28"><rect x="3" y="4" width="13" height="16" fill="#fff" stroke="#555"/><rect x="9" y="11" width="16" height="15" fill="#d8f0f0" stroke="#3a7a8a" stroke-width="1"/><path d="M9 16 H25 M9 21 H25 M14 11 V26 M19 11 V26" stroke="#3a7a8a" stroke-width="0.8"/><circle cx="21" cy="7" r="4" fill="#d8d040" stroke="#888"/></svg>
<svg style="left:1178.5px;top:157.5px" width="31" height="31" viewBox="0 0 28 28"><rect x="4" y="8" width="7" height="18" fill="#2a8ad8"/><rect x="15" y="3" width="8" height="20" fill="#2a5ad0"/><circle cx="14" cy="15" r="3" fill="#f0a020"/><path d="M4 8 L11 4" stroke="#f0c020" stroke-width="2"/></svg>
<svg style="left:1219.5px;top:157.5px" width="31" height="31" viewBox="0 0 28 28"><rect x="3" y="2" width="10" height="17" fill="#fff" stroke="#111" stroke-width="1.6"/><path d="M4 8 L12 4 M4 13 L12 9 M4 18 L12 14" stroke="#111" stroke-width="2"/><rect x="3" y="20" width="10" height="6" fill="#fff" stroke="#e02020" stroke-dasharray="1.5 1"/><path d="M21 4 V22" stroke="#e02020" stroke-width="1.6"/><path d="M18 19 L21 25 L24 19 Z" fill="#e02020"/></svg>
<svg style="left:1256.5px;top:157.5px" width="31" height="31" viewBox="0 0 28 28"><path d="M8 4 H25 V26 H8 Z" fill="#e8e0a8" stroke="#888" stroke-width="1"/><rect x="12" y="9" width="9" height="8" fill="#fff" stroke="#888"/><path d="M3 10 Q3 5 8 7" fill="none" stroke="#e02020" stroke-width="1.6"/></svg>
<svg style="left:1297.5px;top:157.5px" width="31" height="31" viewBox="0 0 28 28"><rect x="4" y="9" width="21" height="17" fill="#c8e0ff" stroke="#3a5ab8" stroke-width="1.2"/><path d="M4 14 H25 M4 19 H25 M9 9 V26 M14 9 V26 M19 9 V26" stroke="#3a5ab8" stroke-width="0.8"/><path d="M7 3 H22 V15 H7 Z" fill="#e8e0a0" stroke="#7a9a40"/><circle cx="5" cy="6" r="2" fill="#e02020"/></svg>
<svg style="left:1337.5px;top:157.5px" width="31" height="31" viewBox="0 0 28 28"><circle cx="16" cy="14" r="10" fill="#c0c0d0" stroke="#888"/><path d="M5 26 L15 16 M13 12 Q19 10 19 17 M3 22 Q2 27 8 27" fill="none" stroke="#e8c030" stroke-width="3.4"/></svg>
<svg style="left:1375.5px;top:157.5px" width="31" height="31" viewBox="0 0 28 28"><rect x="3" y="9" width="19" height="18" fill="#f0f0f0" stroke="#999"/><text x="12" y="25" font-size="17" font-family="Liberation Serif" text-anchor="middle" fill="#111">A</text><path d="M16 14 L25 3 L27 5 L18 16 Z" fill="#f0c030" stroke="#a07010" stroke-width="0.6"/></svg>
<svg style="left:1416.5px;top:157.5px" width="31" height="31" viewBox="0 0 28 28"><rect x="3" y="3" width="6" height="21" rx="2" fill="#ddd" stroke="#555"/><path d="M4 9 L8 11 M4 14 L8 16 M4 19 L8 21" stroke="#555"/><ellipse cx="20" cy="7" rx="6" ry="3" fill="#c8e0d0" stroke="#555"/><rect x="14" y="7" width="12" height="10" fill="#c8e0d0" stroke="#555"/><path d="M14 26 L22 17" stroke="#e8c030" stroke-width="3"/></svg>
<svg style="left:1455.5px;top:157.5px" width="31" height="31" viewBox="0 0 28 28"><rect x="2" y="5" width="25" height="20" rx="2" fill="#1a8a9a" stroke="#0a4a5a" stroke-width="1.2"/><rect x="6" y="8" width="17" height="6" fill="#60d0e0"/><path d="M6 17 H23 M6 21 H23" stroke="#a0f0f8" stroke-width="1.5" stroke-dasharray="2 1.5"/></svg>
<svg style="left:1524.5px;top:157.5px" width="31" height="31" viewBox="0 0 28 28"><path d="M3 7 L8 3 H25 V21 L21 25 H3 Z M3 7 H21 V25 M21 7 L25 3" fill="#fff" stroke="#333" stroke-width="1.2"/><path d="M7 10.5 L14.5 6 L22 10.5 L14.5 15.0 Z" fill="#ff8090" stroke="none" stroke-width="0.8"/><path d="M7 10.5 L14.5 15.0 L14.5 23.7 L7 19.2 Z" fill="#e01020" stroke="none" stroke-width="0.8"/><path d="M22 10.5 L14.5 15.0 L14.5 23.7 L22 19.2 Z" fill="#a00010" stroke="none" stroke-width="0.8"/></svg>
<svg style="left:1563.5px;top:157.5px" width="31" height="31" viewBox="0 0 28 28"><path d="M7 3 H22 L20 14 H9 Z" fill="#f8c020" stroke="#b08010"/><path d="M3 12 V25 H25 V12 H21 L19 17 H9 L7 12 Z" fill="#d8d0c0" stroke="#555" stroke-width="1"/></svg>
<svg style="left:1604.5px;top:157.5px" width="31" height="31" viewBox="0 0 28 28"><rect x="3" y="3" width="9" height="18" rx="3" fill="#a8c8ff" stroke="#5a7ad8"/><rect x="15" y="10" width="9" height="16" rx="2" fill="#f8c040" stroke="#c08010"/><path d="M8 22 L16 24" stroke="#f08020" stroke-width="2.4"/></svg>
<svg style="left:1643.5px;top:157.5px" width="31" height="31" viewBox="0 0 28 28"><path d="M3 8.399999999999999 L12.0 3 L21 8.399999999999999 L12.0 13.799999999999999 Z" fill="#d8f0ff" stroke="#5a8ab8" stroke-width="0.7"/><path d="M3 8.399999999999999 L12.0 13.799999999999999 L12.0 24.24 L3 18.84 Z" fill="#a8d0f8" stroke="#5a8ab8" stroke-width="0.7"/><path d="M21 8.399999999999999 L12.0 13.799999999999999 L12.0 24.24 L21 18.84 Z" fill="#78a8e8" stroke="#5a8ab8" stroke-width="0.7"/><path d="M12 12 L24 22" stroke="#f0a020" stroke-width="3"/><path d="M20 22 L26 24 L24 18 Z" fill="#f08020"/><path d="M14 14 L25 8 V25 L14 27 Z" fill="#f8c040" opacity="0.7"/></svg>
<svg style="left:1684.5px;top:157.5px" width="31" height="31" viewBox="0 0 28 28"><path d="M2 5.6 L8.0 2 L14 5.6 L8.0 9.2 Z" fill="#d8f0ff" stroke="none" stroke-width="0.8"/><path d="M2 5.6 L8.0 9.2 L8.0 16.16 L2 12.56 Z" fill="#a8d0f8" stroke="none" stroke-width="0.8"/><path d="M14 5.6 L8.0 9.2 L8.0 16.16 L14 12.56 Z" fill="#78a8e8" stroke="none" stroke-width="0.8"/><path d="M10 14 Q12 24 22 22" fill="none" stroke="#f08020" stroke-width="2.6"/><path d="M14 16 L25 12 L27 24 L16 27 Z" fill="#f8b040" opacity="0.85"/></svg>
<svg style="left:1752.5px;top:157.5px" width="31" height="31" viewBox="0 0 28 28"><rect x="0" y="0" width="28" height="30" fill="#fbfbf0"/><text x="7" y="12" font-size="11" fill="#7a9a40" text-anchor="middle">重</text><text x="21" y="12" font-size="11" fill="#7a9a40" text-anchor="middle">生</text><text x="7" y="26" font-size="11" fill="#7a9a40" text-anchor="middle">视</text><text x="21" y="26" font-size="11" fill="#7a9a40" text-anchor="middle">图</text></svg>
<svg style="left:1799.5px;top:157.5px" width="31" height="31" viewBox="0 0 28 28"><path d="M3 9.6 L14.0 3 L25 9.6 L14.0 16.2 Z" fill="#d0e0ff" stroke="none" stroke-width="0.8"/><path d="M3 9.6 L14.0 16.2 L14.0 28.96 L3 22.36 Z" fill="#f01818" stroke="none" stroke-width="0.8"/><path d="M25 9.6 L14.0 16.2 L14.0 28.96 L25 22.36 Z" fill="#3a70e8" stroke="none" stroke-width="0.8"/></svg>
<svg style="left:1846.5px;top:157.5px" width="31" height="31" viewBox="0 0 28 28"><path d="M3 7 L8 3 H25 V21 L21 25 H3 Z M3 7 H21 V25 M21 7 L25 3" fill="#fff" stroke="#333" stroke-width="1.2"/><path d="M7 10.5 L14.5 6 L22 10.5 L14.5 15.0 Z" fill="#ff8090" stroke="none" stroke-width="0.8"/><path d="M7 10.5 L14.5 15.0 L14.5 23.7 L7 19.2 Z" fill="#e01020" stroke="none" stroke-width="0.8"/><path d="M22 10.5 L14.5 15.0 L14.5 23.7 L22 19.2 Z" fill="#a00010" stroke="none" stroke-width="0.8"/></svg>
<svg style="left:773px;top:171px" width="8" height="5" viewBox="0 0 8 5"><path d="M0 0 H8 L4 4.5 Z" fill="#111"/></svg>
<svg style="left:828px;top:171px" width="8" height="5" viewBox="0 0 8 5"><path d="M0 0 H8 L4 4.5 Z" fill="#111"/></svg>
<svg style="left:1001px;top:179px" width="8" height="5" viewBox="0 0 8 5"><path d="M0 0 H8 L4 4.5 Z" fill="#111"/></svg>
<svg style="left:1109px;top:179px" width="8" height="5" viewBox="0 0 8 5"><path d="M0 0 H8 L4 4.5 Z" fill="#111"/></svg>
<svg style="left:1495px;top:179px" width="8" height="5" viewBox="0 0 8 5"><path d="M0 0 H8 L4 4.5 Z" fill="#111"/></svg>
<svg style="left:1723px;top:179px" width="8" height="5" viewBox="0 0 8 5"><path d="M0 0 H8 L4 4.5 Z" fill="#111"/></svg>
<svg style="left:1886px;top:179px" width="8" height="5" viewBox="0 0 8 5"><path d="M0 0 H8 L4 4.5 Z" fill="#111"/></svg>
<div class="a" style="left:1016px;top:155px;width:2px;height:38px;background:#b8b8b8;border-right:1px solid #ececec"></div>
<div class="a" style="left:1124px;top:155px;width:2px;height:38px;background:#b8b8b8;border-right:1px solid #ececec"></div>
<div class="a" style="left:1511px;top:155px;width:2px;height:38px;background:#b8b8b8;border-right:1px solid #ececec"></div>
<div class="a" style="left:1737px;top:155px;width:2px;height:38px;background:#b8b8b8;border-right:1px solid #ececec"></div>
<div class="a" style="left:1792px;top:155px;width:2px;height:38px;background:#b8b8b8;border-right:1px solid #ececec"></div>
<div class="a" style="left:1840px;top:155px;width:2px;height:38px;background:#b8b8b8;border-right:1px solid #ececec"></div>
<div class="a" style="left:9px;top:156px;width:3px;height:36px;background:repeating-linear-gradient(#888 0 1px,#fff 1px 2px,transparent 2px 4px)"></div>
<div class="a" style="left:1022px;top:156px;width:3px;height:36px;background:repeating-linear-gradient(#888 0 1px,#fff 1px 2px,transparent 2px 4px)"></div>
<div class="a" style="left:1131px;top:156px;width:3px;height:36px;background:repeating-linear-gradient(#888 0 1px,#fff 1px 2px,transparent 2px 4px)"></div>
<div class="a" style="left:1518px;top:156px;width:3px;height:36px;background:repeating-linear-gradient(#888 0 1px,#fff 1px 2px,transparent 2px 4px)"></div>
<div class="a" style="left:1744px;top:156px;width:3px;height:36px;background:repeating-linear-gradient(#888 0 1px,#fff 1px 2px,transparent 2px 4px)"></div>
<div class="a" style="left:9px;top:38px;width:3px;height:22px;background:repeating-linear-gradient(#888 0 1px,#fff 1px 2px,transparent 2px 4px)"></div>
<svg style="left:10.0px;top:37.0px" width="22" height="22" viewBox="0 0 28 28"><rect x="7" y="3" width="6" height="20" rx="1.5" fill="#4a5ad8" stroke="#22307a" stroke-width="0.7"/><path d="M8 7 L12 9 M8 12 L12 14 M8 17 L12 19" stroke="#c8d0ff" stroke-width="1"/><path d="M14 10 L26 8 M14 13 L25 11 M14 16 L23 15" stroke="#555" stroke-width="1.4"/><polygon points="13.0,24.0 11.2,24.5 12.1,26.1 10.5,25.2 10.0,27.0 9.5,25.2 7.9,26.1 8.8,24.5 7.0,24.0 8.8,23.5 7.9,21.9 9.5,22.8 10.0,21.0 10.5,22.8 12.1,21.9 11.2,23.5" fill="#f6ee3a" stroke="#b8a010" stroke-width="0.5"/></svg>
<div class="a" style="left:1840px;top:39px;width:22px;height:20px;background:linear-gradient(#fafafa,#dcdcdc);border:1px solid #8a8a8a;border-radius:3px"></div>
<div class="a" style="left:1865px;top:39px;width:22px;height:20px;background:linear-gradient(#fafafa,#dcdcdc);border:1px solid #8a8a8a;border-radius:3px"></div>
<div class="a" style="left:1890px;top:39px;width:22px;height:20px;background:linear-gradient(#fafafa,#dcdcdc);border:1px solid #8a8a8a;border-radius:3px"></div>
<div class="a" style="left:1846px;top:51px;width:9px;height:3px;background:#333"></div>
<div class="a" style="left:1869px;top:46px;width:10px;height:8px;border:1.5px solid #333;border-top-width:2px;background:transparent"></div>
<svg style="left:1894px;top:42px" width="14" height="14" viewBox="0 0 14 14"><path d="M2 2 L12 12 M12 2 L2 12" stroke="#333" stroke-width="2.2"/></svg>
<svg style="left:5.0px;top:5.0px" width="22" height="22" viewBox="0 0 28 28"><circle cx="13" cy="15" r="11" fill="url(#gg)"/><path d="M3 21 Q14 22 25 8" fill="none" stroke="#e8d030" stroke-width="2.5"/><path d="M7 2 L19 2 L13 13 Z" fill="#e02020" stroke="#901010" stroke-width="0.6"/></svg>
<div class="a" style="left:1832px;top:5px;width:24px;height:22px;background:linear-gradient(#6a6a6a,#3a3a3a);border:1px solid #222;border-radius:3px"></div>
<div class="a" style="left:1836px;top:19px;width:9px;height:3px;background:#fff"></div>
<div class="a" style="left:1862px;top:5px;width:24px;height:22px;background:linear-gradient(#6a6a6a,#3a3a3a);border:1px solid #222;border-radius:3px"></div>
<div class="a" style="left:1866px;top:9px;width:15px;height:13px;border:2px solid #fff;border-top-width:3px"></div>
<div class="a" style="left:1889px;top:5px;width:25px;height:22px;background:linear-gradient(#f08060,#d84020);border:1px solid #6a1a0a;border-radius:3px"></div>
<svg style="left:1895px;top:9px" width="14" height="14" viewBox="0 0 14 14"><path d="M2 2 L12 12 M12 2 L2 12" stroke="#fff" stroke-width="2.6"/></svg>
<div class="a" style="left:10px;top:203px;width:146px;height:21px;background:#fff;border:1px solid #7a8aa0;border-radius:3px"></div>
<div class="t" style="left:12px;top:205px;font-size:16px;color:#111">无选择过滤器</div>
<div class="a" style="left:133px;top:204px;width:22px;height:19px;background:linear-gradient(#b8d4f4,#5a8ad0);border-left:1px solid #7a8aa0"></div>
<svg style="left:137px;top:208px" width="14" height="10" viewBox="0 0 14 10"><path d="M1 1 H13 L7 9 Z" fill="#111" stroke="#fff" stroke-width="0.8"/></svg>
<div class="a" style="left:165px;top:203px;width:154px;height:21px;background:#fff;border:1px solid #7a8aa0;border-radius:3px"></div>
<div class="t" style="left:167px;top:205px;font-size:16px;color:#111">整个装配</div>
<div class="a" style="left:297px;top:204px;width:22px;height:19px;background:linear-gradient(#b8d4f4,#5a8ad0);border-left:1px solid #7a8aa0"></div>
<svg style="left:301px;top:208px" width="14" height="10" viewBox="0 0 14 10"><path d="M1 1 H13 L7 9 Z" fill="#111" stroke="#fff" stroke-width="0.8"/></svg>
<svg style="left:329.0px;top:202.0px" width="22" height="22" viewBox="0 0 28 28"><path d="M4 8 H12 V22 H4 Z M14 6 H22 V20 H14 Z" fill="#aaa" stroke="#888"/><circle cx="18" cy="8" r="4" fill="none" stroke="#999" stroke-width="2"/></svg>
<svg style="left:365.0px;top:202.0px" width="22" height="22" viewBox="0 0 28 28"><path d="M3 5 H17 L11 13 V20" fill="none" stroke="#999" stroke-width="1.6"/><path d="M12 14 H24 L19 20 V26" fill="#bbb"/></svg>
<svg style="left:392.0px;top:202.0px" width="22" height="22" viewBox="0 0 28 28"><rect x="3" y="3" width="22" height="22" fill="#fff" stroke="#d04040" stroke-width="1.6"/><path d="M10 6 V14 M6 10 H14" stroke="#222" stroke-width="1.5"/><path d="M14 15 H24 L19 22 Z" fill="#f0b030"/></svg>
<svg style="left:436.0px;top:202.0px" width="22" height="22" viewBox="0 0 28 28"><path d="M14 8 V26 M6 18 H22" stroke="#e02020" stroke-width="2"/><path d="M4 6 Q8 2 12 6" fill="none" stroke="#e02020" stroke-width="2"/><circle cx="14" cy="18" r="3" fill="none" stroke="#e02020" stroke-width="1.5"/></svg>
<svg style="left:467.0px;top:202.0px" width="22" height="22" viewBox="0 0 28 28"><path d="M4 6 Q8 2 12 6 L10 9" fill="none" stroke="#333" stroke-width="1.6"/><path d="M12 10 L20 26" stroke="#e8c030" stroke-width="2.5"/><path d="M16 13 V26" stroke="#2a3ad0" stroke-dasharray="2 1.5"/></svg>
<svg style="left:501.0px;top:202.0px" width="22" height="22" viewBox="0 0 28 28"><path d="M8 4 H20 L26 14 L20 24 H8 L2 14 Z" fill="#f0f0f0" stroke="#222" stroke-width="1.8"/><circle cx="14" cy="14" r="2.2" fill="#d81c1c"/></svg>
<svg style="left:532.0px;top:202.0px" width="22" height="22" viewBox="0 0 28 28"><rect x="4" y="5" width="20" height="18" fill="none" stroke="#222" stroke-width="1.6" stroke-dasharray="3 2"/><circle cx="4" cy="5" r="1.8" fill="#d81c1c"/><circle cx="24" cy="23" r="1.8" fill="#d81c1c"/></svg>
<svg style="left:585.0px;top:202.0px" width="22" height="22" viewBox="0 0 28 28"><path d="M3 14 L14 5 L25 12 L16 22 Z" fill="#f0f0f0" stroke="#555" stroke-width="1.2"/><path d="M3 14 V18 L16 26 V22" fill="#ccc" stroke="#555"/><path d="M9 10 L20 17" stroke="#e06060"/></svg>
<svg style="left:615.0px;top:202.0px" width="22" height="22" viewBox="0 0 28 28"><path d="M4 10.0 L14.0 4 L24 10.0 L14.0 16.0 Z" fill="#b8e0ff" stroke="#2a5ab8" stroke-width="0.6"/><path d="M4 10.0 L14.0 16.0 L14.0 27.6 L4 21.6 Z" fill="#78b0f0" stroke="#2a5ab8" stroke-width="0.6"/><path d="M24 10.0 L14.0 16.0 L14.0 27.6 L24 21.6 Z" fill="#3a80e0" stroke="#2a5ab8" stroke-width="0.6"/></svg>
<svg style="left:421px;top:211px" width="8" height="5" viewBox="0 0 8 5"><path d="M0 0 H8 L4 4.5 Z" fill="#111"/></svg>
<svg style="left:562px;top:211px" width="8" height="5" viewBox="0 0 8 5"><path d="M0 0 H8 L4 4.5 Z" fill="#111"/></svg>
<svg style="left:1901px;top:215px" width="8" height="5" viewBox="0 0 8 5"><path d="M0 0 H8 L4 4.5 Z" fill="#111"/></svg>
<div class="a" style="left:357px;top:200px;width:2px;height:28px;background:#b8b8b8;border-right:1px solid #ececec"></div>
<div class="a" style="left:495px;top:200px;width:2px;height:28px;background:#b8b8b8;border-right:1px solid #ececec"></div>
<div class="a" style="left:578px;top:200px;width:2px;height:28px;background:#b8b8b8;border-right:1px solid #ececec"></div>
<svg style="left:12px;top:240px" width="20" height="20" viewBox="0 0 20 20"><circle cx="10" cy="10" r="6" fill="none" stroke="#222" stroke-width="2.4"/><circle cx="10" cy="10" r="8.2" fill="none" stroke="#222" stroke-width="2.4" stroke-dasharray="2.2 2.1"/><circle cx="10" cy="10" r="1.2" fill="#444"/></svg>
<div class="a" style="left:8px;top:289px;width:34px;height:52px;background:linear-gradient(90deg,#f0f0f0,#dcdcdc);border:1px solid #8a8a8a;border-radius:6px 0 0 6px"></div>
<svg style="left:10.5px;top:300.5px" width="29" height="29" viewBox="0 0 28 28"><path d="M2 4.0 L7.0 1 L12 4.0 L7.0 7.0 Z" fill="#f8e870" stroke="none" stroke-width="0.8"/><path d="M2 4.0 L7.0 7.0 L7.0 12.8 L2 9.8 Z" fill="#e8c020" stroke="none" stroke-width="0.8"/><path d="M12 4.0 L7.0 7.0 L7.0 12.8 L12 9.8 Z" fill="#c8a010" stroke="none" stroke-width="0.8"/><path d="M8 8.0 L13.0 5 L18 8.0 L13.0 11.0 Z" fill="#f8e870" stroke="none" stroke-width="0.8"/><path d="M8 8.0 L13.0 11.0 L13.0 16.8 L8 13.8 Z" fill="#e8c020" stroke="none" stroke-width="0.8"/><path d="M18 8.0 L13.0 11.0 L13.0 16.8 L18 13.8 Z" fill="#c8a010" stroke="none" stroke-width="0.8"/><path d="M6 16 V27 M6 22 H12 M18 17 H26" stroke="#2a3ac0" stroke-width="1.4"/><path d="M14 20.0 L19.0 17 L24 20.0 L19.0 23.0 Z" fill="#f8e870" stroke="none" stroke-width="0.8"/><path d="M14 20.0 L19.0 23.0 L19.0 28.8 L14 25.8 Z" fill="#e8c020" stroke="none" stroke-width="0.8"/><path d="M24 20.0 L19.0 23.0 L19.0 28.8 L24 25.8 Z" fill="#c8a010" stroke="none" stroke-width="0.8"/></svg>
<div class="a" style="left:8px;top:345px;width:34px;height:49px;background:linear-gradient(90deg,#f0f0f0,#dcdcdc);border:1px solid #8a8a8a;border-radius:6px 0 0 6px"></div>
<svg style="left:10.5px;top:355.0px" width="29" height="29" viewBox="0 0 28 28"><path d="M3 2 L13 8 L3 14 Z M25 2 L15 8 L25 14 Z" fill="#1a2ad0"/><path d="M14 0 V28" stroke="#222" stroke-dasharray="2 1.5"/><rect x="2" y="17" width="10" height="9" fill="#f8f030" stroke="#555"/><path d="M16 26 L16 16 L27 26 Z" fill="#d01818"/></svg>
<div class="a" style="left:8px;top:399px;width:34px;height:50px;background:linear-gradient(90deg,#f0f0f0,#dcdcdc);border:1px solid #8a8a8a;border-radius:6px 0 0 6px"></div>
<svg style="left:10.5px;top:409.5px" width="29" height="29" viewBox="0 0 28 28"><rect x="2" y="2" width="12" height="11" rx="3" fill="#f0c8e8" stroke="#a04090"/><path d="M6 15 V27 M6 21 H12 M17 14 H26" stroke="#2a3ac0" stroke-width="1.4"/><circle cx="20" cy="21" r="5" fill="none" stroke="#c04090" stroke-width="1.3"/><circle cx="20" cy="21" r="1.6" fill="#c04090"/></svg>
<div class="a" style="left:8px;top:450px;width:36px;height:55px;background:#ececec;border:1px solid #9a9a9a;border-right:none;border-radius:6px 0 0 6px"></div>
<svg style="left:10.5px;top:463.0px" width="29" height="29" viewBox="0 0 28 28"><rect x="4" y="1" width="6" height="14" fill="#3a7ae0"/><path d="M10 4 H20 M10 7 H18 M18 14 H27" stroke="#3a7ae0" stroke-width="1.5"/><path d="M7 15 V27 M7 21 H14" stroke="#2a3ac0" stroke-width="1.4"/><path d="M16 18 V26 H26 Z" fill="#d8e8ff" stroke="#2a3ac0"/></svg>
<div class="a" style="left:8px;top:504px;width:34px;height:52px;background:linear-gradient(90deg,#f0f0f0,#dcdcdc);border:1px solid #8a8a8a;border-radius:6px 0 0 6px"></div>
<svg style="left:10.5px;top:515.5px" width="29" height="29" viewBox="0 0 28 28"><path d="M3 8 L22 3 V18 L3 22 Z" fill="#f8e8d0" stroke="#c08080"/><path d="M3 13 L22 9 M3 17 L22 13 M8 7 V21 M13 6 V20 M18 4 V19" stroke="#e0a080" stroke-width="0.8"/><path d="M9 18.1 L17.5 13 L26 18.1 L17.5 23.2 Z" fill="#f8c040" stroke="none" stroke-width="0.8"/><path d="M9 18.1 L17.5 23.2 L17.5 33.06 L9 27.96 Z" fill="#f08020" stroke="none" stroke-width="0.8"/><path d="M26 18.1 L17.5 23.2 L17.5 33.06 L26 27.96 Z" fill="#3a6ae0" stroke="none" stroke-width="0.8"/></svg>
<div class="a" style="left:8px;top:560px;width:34px;height:51px;background:linear-gradient(90deg,#f0f0f0,#dcdcdc);border:1px solid #8a8a8a;border-radius:6px 0 0 6px"></div>
<svg style="left:10.5px;top:571.0px" width="29" height="29" viewBox="0 0 28 28"><path d="M4 10 H20 V26 H4 Z" fill="#e8e8e8" stroke="#555"/><rect x="7" y="14" width="8" height="8" fill="#fff" stroke="#555"/><rect x="17" y="3" width="8" height="8" fill="#f0a060" stroke="#c05030"/><path d="M20 20 Q26 18 24 26" fill="none" stroke="#333" stroke-width="1.5"/></svg>
<div class="a" style="left:8px;top:615px;width:34px;height:49px;background:linear-gradient(90deg,#f0f0f0,#dcdcdc);border:1px solid #8a8a8a;border-radius:6px 0 0 6px"></div>
<svg style="left:10.5px;top:625.0px" width="29" height="29" viewBox="0 0 28 28"><rect x="2" y="6" width="6" height="20" fill="#f08020"/><rect x="8" y="4" width="6" height="22" fill="#20a040"/><rect x="14" y="6" width="6" height="20" fill="#3a8ae0"/><path d="M20 6 L26 4 V24 L20 26 Z" fill="#2a6ad0"/><path d="M2 6 L8 3 L26 3" stroke="#ccc" fill="none"/></svg>
<div class="a" style="left:8px;top:684px;width:34px;height:49px;background:linear-gradient(90deg,#f0f0f0,#dcdcdc);border:1px solid #8a8a8a;border-radius:6px 0 0 6px"></div>
<svg style="left:10.5px;top:694.0px" width="29" height="29" viewBox="0 0 28 28"><circle cx="10" cy="18" r="8" fill="#2a7ae0" stroke="#1a4aa0"/><rect x="8.8" y="12" width="2.6" height="2.4" fill="#fff"/><rect x="8.8" y="15.6" width="2.6" height="7" fill="#fff"/><path d="M14 8 Q22 10 22 18 M15 3 Q26 5 27 18" fill="none" stroke="#2a6ad0" stroke-width="2.4"/></svg>
<div class="a" style="left:8px;top:753px;width:34px;height:49px;background:linear-gradient(90deg,#f0f0f0,#dcdcdc);border:1px solid #8a8a8a;border-radius:6px 0 0 6px"></div>
<svg style="left:10.5px;top:763.0px" width="29" height="29" viewBox="0 0 28 28"><path d="M5 2 H18 L24 8 V26 H5 Z" fill="#fff" stroke="#3a6ab8" stroke-width="1.2"/><circle cx="14" cy="17" r="5.5" fill="#2a9a7a"/><path d="M11 15 Q14 13 17 16" stroke="#3a7ae0" fill="none" stroke-width="1.5"/></svg>
<div class="a" style="left:8px;top:822px;width:34px;height:51px;background:linear-gradient(90deg,#f0f0f0,#dcdcdc);border:1px solid #8a8a8a;border-radius:6px 0 0 6px"></div>
<svg style="left:10.5px;top:833.0px" width="29" height="29" viewBox="0 0 28 28"><circle cx="14" cy="14" r="12" fill="#e8eef8" stroke="#666" stroke-width="1.6"/><circle cx="14" cy="14" r="9.5" fill="#fff" stroke="#aab"/><path d="M14 7 V14 H20" stroke="#111" stroke-width="1.6" fill="none"/></svg>
<div class="a" style="left:8px;top:877px;width:34px;height:50px;background:linear-gradient(90deg,#f0f0f0,#dcdcdc);border:1px solid #8a8a8a;border-radius:6px 0 0 6px"></div>
<svg style="left:10.5px;top:887.5px" width="29" height="29" viewBox="0 0 28 28"><defs><linearGradient id="cb" x1="0" y1="0" x2="0" y2="1"><stop offset="0" stop-color="#f03020"/><stop offset="0.35" stop-color="#f0e020"/><stop offset="0.6" stop-color="#20d040"/><stop offset="1" stop-color="#2040f0"/></linearGradient></defs><rect x="4" y="2" width="7" height="23" fill="url(#cb)"/><path d="M14 10 L24 24" stroke="#111" stroke-width="2.6"/></svg>
<div class="a" style="left:8px;top:930px;width:34px;height:32px;background:linear-gradient(90deg,#f0f0f0,#dcdcdc);border:1px solid #8a8a8a;border-radius:6px 0 0 6px"></div>
<svg style="left:10.5px;top:930.5px" width="29" height="29" viewBox="0 0 28 28"><rect x="4" y="10" width="9" height="9" fill="#3a7ae0"/><path d="M13 14 H26" stroke="#3a5ab8" stroke-width="1.5"/></svg>
<div class="a" style="left:13px;top:963px;width:20px;height:19px;background:linear-gradient(#f4f4f4,#d8d8d8);border:1px solid #aaa"></div>
<div class="a" style="left:13px;top:983px;width:20px;height:19px;background:linear-gradient(#f4f4f4,#d8d8d8);border:1px solid #aaa"></div>
<div class="a" style="left:13px;top:1003px;width:20px;height:19px;background:linear-gradient(#f4f4f4,#d8d8d8);border:1px solid #aaa"></div>
<div class="a" style="left:13px;top:1024px;width:20px;height:19px;background:linear-gradient(#f4f4f4,#d8d8d8);border:1px solid #aaa"></div>
<svg style="left:16px;top:966px" width="14" height="76" viewBox="0 0 14 76"><path d="M3 3 H11 M3 13 L7 7 L11 13 Z" stroke="#999" fill="#bbb"/><path d="M3 31 L7 25 L11 31 Z" fill="#bbb"/><path d="M3 46 L11 46 L7 52 Z" fill="#555"/><path d="M3 66 L11 66 L7 72 Z M3 74 H11" fill="#555" stroke="#555"/></svg>
<div class="a" style="left:571px;top:425px;width:54px;height:372px;background:linear-gradient(90deg,#e6e6e6,#dadada);border-top:1px solid #f8f8f8"></div>
<div class="a" style="left:576px;top:428px;width:44px;height:2px;background:repeating-linear-gradient(90deg,#999 0 2px,transparent 2px 4px)"></div>
<div class="a" style="left:571px;top:797px;width:54px;height:240px;background:linear-gradient(90deg,#e6e6e6,#dadada);border-top:1px solid #c8c8c8"></div>
<svg style="left:581.5px;top:436.5px" width="31" height="31" viewBox="0 0 28 28"><rect x="6" y="3" width="6" height="20" rx="1.5" fill="#4a5ad8" stroke="#22307a" stroke-width="0.7"/><path d="M7 7 L11 9 M7 12 L11 14 M7 17 L11 19" stroke="#c8d0ff" stroke-width="1"/><path d="M13 10 L25 8 M13 13 L24 11 M13 16 L22 15" stroke="#555" stroke-width="1.4"/></svg>
<svg style="left:581.5px;top:476.5px" width="31" height="31" viewBox="0 0 28 28"><rect x="5" y="2" width="6" height="17" rx="1.5" fill="#4a5ad8" stroke="#22307a" stroke-width="0.7"/><path d="M6 6 L10 8 M6 11 L10 13 M6 16 L10 18" stroke="#c8d0ff" stroke-width="1"/><path d="M12 6 L24 4 M12 9 L23 7 M12 12 L21 11" stroke="#555" stroke-width="1.4"/><rect x="12" y="14" width="14" height="11" fill="#c8e0ff" stroke="#3a5ab8" stroke-width="1.2"/></svg>
<svg style="left:581.5px;top:518.5px" width="31" height="31" viewBox="0 0 28 28"><path d="M6 4 H14 M6 4 V10 H12 V16 H6" fill="none" stroke="#aaa" stroke-width="1.6"/><path d="M10 24 L22 14 M20 11 Q26 10 25 16" fill="none" stroke="#c8b070" stroke-width="3"/></svg>
<svg style="left:581.5px;top:561.5px" width="31" height="31" viewBox="0 0 28 28"><path d="M6 4 H13 M6 4 V10 H12 V16 H6" fill="none" stroke="#222" stroke-width="1.6"/><path d="M14 6 L25 18 M25 6 L14 18" stroke="#222" stroke-width="2"/><path d="M16 24 Q22 27 25 20" fill="none" stroke="#2a4ab0" stroke-width="2"/></svg>
<svg style="left:581.5px;top:601.5px" width="31" height="31" viewBox="0 0 28 28"><path d="M6 3 H13 M6 3 V10 H12 V17 H6" fill="none" stroke="#222" stroke-width="1.6"/><path d="M12 22 Q18 27 24 20" fill="none" stroke="#2a4ab0" stroke-width="2"/><path d="M22 17 L25 21 L20 22 Z" fill="#2a4ab0"/></svg>
<svg style="left:581.5px;top:641.5px" width="31" height="31" viewBox="0 0 28 28"><path d="M3 7 L6 11 L12 3" fill="none" stroke="#20b040" stroke-width="2.4"/><rect x="12" y="4" width="6" height="16" rx="1.5" fill="#4a5ad8" stroke="#22307a" stroke-width="0.7"/><path d="M13 8 L17 10 M13 13 L17 15 M13 18 L17 20" stroke="#c8d0ff" stroke-width="1"/><path d="M3 18 Q14 12 25 18 L25 24 Q14 28 3 24 Z" fill="#f0c030" stroke="#b08010"/></svg>
<svg style="left:581.5px;top:680.5px" width="31" height="31" viewBox="0 0 28 28"><path d="M3 7 L6 11 L12 3" fill="none" stroke="#20b040" stroke-width="2.4"/><rect x="11" y="5" width="6" height="14" rx="1.5" fill="#4a5ad8" stroke="#22307a" stroke-width="0.7"/><path d="M12 9 L16 11 M12 14 L16 16 M12 19 L16 21" stroke="#c8d0ff" stroke-width="1"/><path d="M3 20 L14 14 L25 20 L14 26 Z" fill="#c8d8ff" stroke="#3a4ab0" stroke-width="1.2"/><path d="M7 20 Q14 14 21 22" stroke="#e02020" fill="none"/></svg>
<svg style="left:581.5px;top:720.5px" width="31" height="31" viewBox="0 0 28 28"><rect x="11" y="2" width="6" height="12" rx="1.5" fill="#4a5ad8" stroke="#22307a" stroke-width="0.7"/><path d="M12 6 L16 8 M12 11 L16 13 M12 16 L16 18" stroke="#c8d0ff" stroke-width="1"/><path d="M3 18 L14 12 L25 18 L14 24 Z" fill="#c8d8ff" stroke="#3a4ab0" stroke-width="1.2"/><path d="M7 18 Q14 12 21 20" stroke="#e02020" fill="none" stroke-width="1.4"/><path d="M16 16 L21 16 L26 21 L26 27 L16 27 Z" fill="#fff" stroke="#555" stroke-width="1.2"/><path d="M21 16 L21 21 L26 21" fill="none" stroke="#555" stroke-width="1"/></svg>
<svg style="left:581.5px;top:759.5px" width="31" height="31" viewBox="0 0 28 28"><path d="M3 7 L6 11 L12 3" fill="none" stroke="#20b040" stroke-width="2.4"/><path d="M4 12 H20 V25 H4 Z" fill="#e8e8e8" stroke="#777"/><rect x="7" y="15" width="6" height="6" fill="#fff" stroke="#777"/><path d="M18 24 Q24 20 22 15" fill="none" stroke="#555" stroke-width="1.6"/></svg>
<svg style="left:581.5px;top:806.5px" width="31" height="31" viewBox="0 0 28 28"><rect x="6" y="2" width="6" height="20" rx="1.5" fill="#4a5ad8" stroke="#22307a" stroke-width="0.7"/><path d="M7 6 L11 8 M7 11 L11 13 M7 16 L11 18" stroke="#c8d0ff" stroke-width="1"/><path d="M12 16 H20" stroke="#2a5ad0" stroke-width="3"/><path d="M19 12 L26 16 L19 20 Z" fill="#2a5ad0"/></svg>
<svg style="left:581.5px;top:844.5px" width="31" height="31" viewBox="0 0 28 28"><rect x="4" y="2" width="6" height="14" rx="1.5" fill="#4a5ad8" stroke="#22307a" stroke-width="0.7"/><path d="M5 6 L9 8 M5 11 L9 13 M5 16 L9 18" stroke="#c8d0ff" stroke-width="1"/><path d="M11 8 H22 V24 H11 Z" fill="#e8e8e8" stroke="#555" stroke-width="1"/><path d="M14 12 H20 V18" stroke="#555" fill="none"/><path d="M3 22 H10" stroke="#f08020" stroke-width="2"/><path d="M13 24 L25 26" stroke="#3a4ab0" stroke-width="2"/></svg>
<svg style="left:581.5px;top:886.5px" width="31" height="31" viewBox="0 0 28 28"><rect x="4" y="2" width="6" height="14" rx="1.5" fill="#4a5ad8" stroke="#22307a" stroke-width="0.7"/><path d="M5 6 L9 8 M5 11 L9 13 M5 16 L9 18" stroke="#c8d0ff" stroke-width="1"/><path d="M10 7 L22 5 M10 10 L21 8 M10 13 L19 12" stroke="#555" stroke-width="1.4"/><circle cx="18" cy="19" r="8" fill="#eef" stroke="#666" stroke-width="1.4"/><path d="M18 14 V19 H22" stroke="#111" stroke-width="1.3" fill="none"/></svg>
<svg style="left:581.5px;top:924.5px" width="31" height="31" viewBox="0 0 28 28"><rect x="6" y="3" width="6" height="20" rx="1.5" fill="#4a5ad8" stroke="#22307a" stroke-width="0.7"/><path d="M7 7 L11 9 M7 12 L11 14 M7 17 L11 19" stroke="#c8d0ff" stroke-width="1"/><path d="M13 10 L25 8 M13 13 L24 11 M13 16 L22 15" stroke="#555" stroke-width="1.4"/></svg>
<div class="t" style="left:576px;top:1030px;font-size:11px;color:#222">◂</div>
<div class="a" style="left:65px;top:331px;width:1px;height:516px;background:repeating-linear-gradient(#9a9a9a 0 1px,transparent 1px 2px)"></div>
<div class="a" style="left:66px;top:333px;width:12px;height:1px;background:repeating-linear-gradient(90deg,#9a9a9a 0 1px,transparent 1px 2px)"></div>
<div class="a" style="left:70px;top:358px;width:8px;height:1px;background:repeating-linear-gradient(90deg,#9a9a9a 0 1px,transparent 1px 2px)"></div>
<div class="a" style="left:90px;top:364px;width:1px;height:15px;background:repeating-linear-gradient(#9a9a9a 0 1px,transparent 1px 2px)"></div>
<div class="a" style="left:95px;top:384px;width:7px;height:1px;background:repeating-linear-gradient(90deg,#9a9a9a 0 1px,transparent 1px 2px)"></div>
<div class="a" style="left:114px;top:394px;width:1px;height:299px;background:repeating-linear-gradient(#9a9a9a 0 1px,transparent 1px 2px)"></div>
<div class="a" style="left:115px;top:410px;width:12px;height:1px;background:repeating-linear-gradient(90deg,#9a9a9a 0 1px,transparent 1px 2px)"></div>
<div class="a" style="left:115px;top:436px;width:12px;height:1px;background:repeating-linear-gradient(90deg,#9a9a9a 0 1px,transparent 1px 2px)"></div>
<div class="a" style="left:115px;top:461px;width:12px;height:1px;background:repeating-linear-gradient(90deg,#9a9a9a 0 1px,transparent 1px 2px)"></div>
<div class="a" style="left:115px;top:487px;width:12px;height:1px;background:repeating-linear-gradient(90deg,#9a9a9a 0 1px,transparent 1px 2px)"></div>
<div class="a" style="left:115px;top:513px;width:12px;height:1px;background:repeating-linear-gradient(90deg,#9a9a9a 0 1px,transparent 1px 2px)"></div>
<div class="a" style="left:115px;top:538px;width:12px;height:1px;background:repeating-linear-gradient(90deg,#9a9a9a 0 1px,transparent 1px 2px)"></div>
<div class="a" style="left:115px;top:564px;width:12px;height:1px;background:repeating-linear-gradient(90deg,#9a9a9a 0 1px,transparent 1px 2px)"></div>
<div class="a" style="left:115px;top:590px;width:12px;height:1px;background:repeating-linear-gradient(90deg,#9a9a9a 0 1px,transparent 1px 2px)"></div>
<div class="a" style="left:115px;top:616px;width:12px;height:1px;background:repeating-linear-gradient(90deg,#9a9a9a 0 1px,transparent 1px 2px)"></div>
<div class="a" style="left:115px;top:641px;width:12px;height:1px;background:repeating-linear-gradient(90deg,#9a9a9a 0 1px,transparent 1px 2px)"></div>
<div class="a" style="left:115px;top:667px;width:12px;height:1px;background:repeating-linear-gradient(90deg,#9a9a9a 0 1px,transparent 1px 2px)"></div>
<div class="a" style="left:115px;top:693px;width:12px;height:1px;background:repeating-linear-gradient(90deg,#9a9a9a 0 1px,transparent 1px 2px)"></div>
<div class="a" style="left:70px;top:719px;width:8px;height:1px;background:repeating-linear-gradient(90deg,#9a9a9a 0 1px,transparent 1px 2px)"></div>
<div class="a" style="left:90px;top:727px;width:1px;height:12px;background:repeating-linear-gradient(#9a9a9a 0 1px,transparent 1px 2px)"></div>
<div class="a" style="left:95px;top:744px;width:7px;height:1px;background:repeating-linear-gradient(90deg,#9a9a9a 0 1px,transparent 1px 2px)"></div>
<div class="a" style="left:114px;top:753px;width:1px;height:68px;background:repeating-linear-gradient(#9a9a9a 0 1px,transparent 1px 2px)"></div>
<div class="a" style="left:115px;top:770px;width:10px;height:1px;background:repeating-linear-gradient(90deg,#9a9a9a 0 1px,transparent 1px 2px)"></div>
<div class="a" style="left:115px;top:796px;width:10px;height:1px;background:repeating-linear-gradient(90deg,#9a9a9a 0 1px,transparent 1px 2px)"></div>
<div class="a" style="left:115px;top:821px;width:10px;height:1px;background:repeating-linear-gradient(90deg,#9a9a9a 0 1px,transparent 1px 2px)"></div>
<div class="a" style="left:70px;top:847px;width:8px;height:1px;background:repeating-linear-gradient(90deg,#9a9a9a 0 1px,transparent 1px 2px)"></div>
<div class="a" style="left:90px;top:855px;width:1px;height:18px;background:repeating-linear-gradient(#9a9a9a 0 1px,transparent 1px 2px)"></div>
<div class="a" style="left:91px;top:873px;width:12px;height:1px;background:repeating-linear-gradient(90deg,#9a9a9a 0 1px,transparent 1px 2px)"></div>
<svg style="left:79.5px;top:323.095px" width="19" height="19" viewBox="0 0 28 28"><path d="M2 6 H10 L12 9 H25 V25 H2 Z" fill="#f0e0a0" stroke="#b09040" stroke-width="1.4"/><rect x="10" y="12" width="11" height="11" fill="#fff" stroke="#3a3aa0" stroke-width="1.2"/><path d="M13 15 H18 V17 H13 V20 H18" fill="none" stroke="#3a3aa0" stroke-width="1.3"/></svg>
<svg style="left:79.5px;top:348.825px" width="19" height="19" viewBox="0 0 28 28"><path d="M7 22 V3 M7 22 L20 14 M7 22 L22 27" stroke="#2a4ad0" stroke-width="1.6"/><path d="M7 22 L20 14" stroke="#20a040" stroke-width="2.4"/><path d="M7 22 L21 26" stroke="#d02020" stroke-width="2.4"/><path d="M4 7 L7 2 L10 7 Z" fill="#2a4ad0"/><text x="15" y="9" font-size="8" font-weight="bold" fill="#222" font-family="Liberation Sans">Z</text><text x="22" y="13" font-size="8" font-weight="bold" fill="#222" font-family="Liberation Sans">Y</text><text x="21" y="28" font-size="8" font-weight="bold" fill="#222" font-family="Liberation Sans">X</text></svg>
<svg style="left:103.5px;top:374.555px" width="19" height="19" viewBox="0 0 28 28"><path d="M2 9.899999999999999 L13.5 3 L25 9.899999999999999 L13.5 16.799999999999997 Z" fill="#b8c8ff" stroke="#3a4ab0" stroke-width="0.8"/><path d="M2 9.899999999999999 L13.5 16.799999999999997 L13.5 30.14 L2 23.240000000000002 Z" fill="#7a90f0" stroke="#3a4ab0" stroke-width="0.8"/><path d="M25 9.899999999999999 L13.5 16.799999999999997 L13.5 30.14 L25 23.240000000000002 Z" fill="#4a60d8" stroke="#3a4ab0" stroke-width="0.8"/><path d="M7 10 L13 7 L19 10 L13 13 Z" fill="#e0e8ff" stroke="#3a4ab0" stroke-width="0.8"/></svg>
<svg style="left:147.0px;top:399.785px" width="20" height="20" viewBox="0 0 28 28"><path d="M3 6 V16 Q4 24 14 25 L24 25 V20 L14 20 Q9 19 9 14 V6 Z" fill="#2a7a6a" stroke="#1a3a3a" stroke-width="1"/><rect x="12" y="2" width="7" height="15" fill="#4a5ad8" stroke="#22307a" stroke-width="0.8"/><path d="M19 8 H25 M19 12 H24 M20 22 H26" stroke="#3a9ae0" stroke-width="1.5"/></svg>
<svg style="left:147.0px;top:425.515px" width="20" height="20" viewBox="0 0 28 28"><path d="M3 6 V16 Q4 24 14 25 L24 25 V20 L14 20 Q9 19 9 14 V6 Z" fill="#2a7a6a" stroke="#1a3a3a" stroke-width="1"/><rect x="12" y="2" width="7" height="15" fill="#4a5ad8" stroke="#22307a" stroke-width="0.8"/><path d="M19 8 H25 M19 12 H24 M20 22 H26" stroke="#3a9ae0" stroke-width="1.5"/></svg>
<svg style="left:147.0px;top:451.245px" width="20" height="20" viewBox="0 0 28 28"><rect x="4" y="2" width="5" height="12" fill="#5a6ad8"/><path d="M4 14 L14 9 L26 14 L26 22 L16 27 L4 22 Z" fill="#c8c8c8" stroke="#666" stroke-width="1"/><path d="M4 14 L16 19 L26 14 M16 19 V27" fill="none" stroke="#666" stroke-width="1"/><path d="M9 13 L14 11 L20 14 L14 17 Z" fill="#a0a0a0"/></svg>
<svg style="left:147.0px;top:476.975px" width="20" height="20" viewBox="0 0 28 28"><rect x="4" y="2" width="5" height="12" fill="#5a6ad8"/><path d="M4 14 L14 9 L26 14 L26 22 L16 27 L4 22 Z" fill="#c8c8c8" stroke="#666" stroke-width="1"/><path d="M4 14 L16 19 L26 14 M16 19 V27" fill="none" stroke="#666" stroke-width="1"/><path d="M9 13 L14 11 L20 14 L14 17 Z" fill="#a0a0a0"/></svg>
<svg style="left:147.0px;top:502.70500000000004px" width="20" height="20" viewBox="0 0 28 28"><path d="M4 4 V25 H26" fill="none" stroke="#333" stroke-width="1.6"/><path d="M6 6 V23 H26 V19 H10 V6 Z" fill="#fff" stroke="#888" stroke-width="0.8"/><rect x="13" y="2" width="6" height="14" fill="#4a5ad8" stroke="#22307a" stroke-width="0.8"/><path d="M19 7 H26 M19 11 H26" stroke="#3a4ad0" stroke-width="1.4"/></svg>
<svg style="left:147.0px;top:528.435px" width="20" height="20" viewBox="0 0 28 28"><path d="M3 6 V16 Q4 24 14 25 L24 25 V20 L14 20 Q9 19 9 14 V6 Z" fill="#2a7a6a" stroke="#1a3a3a" stroke-width="1"/><rect x="12" y="2" width="7" height="15" fill="#4a5ad8" stroke="#22307a" stroke-width="0.8"/><path d="M19 8 H25 M19 12 H24 M20 22 H26" stroke="#3a9ae0" stroke-width="1.5"/></svg>
<svg style="left:147.0px;top:554.165px" width="20" height="20" viewBox="0 0 28 28"><path d="M3 6 V16 Q4 24 14 25 L24 25 V20 L14 20 Q9 19 9 14 V6 Z" fill="#2a7a6a" stroke="#1a3a3a" stroke-width="1"/><rect x="12" y="2" width="7" height="15" fill="#4a5ad8" stroke="#22307a" stroke-width="0.8"/><path d="M19 8 H25 M19 12 H24 M20 22 H26" stroke="#3a9ae0" stroke-width="1.5"/></svg>
<svg style="left:147.0px;top:579.895px" width="20" height="20" viewBox="0 0 28 28"><path d="M3 18 Q3 10 12 11 L18 11 Q26 12 25 19 Q25 25 17 25 L15 23 L11 25 Q3 25 3 18 Z" fill="#fff" stroke="#222" stroke-width="1.6"/><rect x="11" y="2" width="6" height="13" fill="#5a6ad8" stroke="#22307a" stroke-width="0.8"/></svg>
<svg style="left:147.0px;top:605.625px" width="20" height="20" viewBox="0 0 28 28"><path d="M3 18 Q3 10 12 11 L18 11 Q26 12 25 19 Q25 25 17 25 L15 23 L11 25 Q3 25 3 18 Z" fill="#fff" stroke="#222" stroke-width="1.6"/><rect x="11" y="2" width="6" height="13" fill="#5a6ad8" stroke="#22307a" stroke-width="0.8"/></svg>
<svg style="left:147.0px;top:631.355px" width="20" height="20" viewBox="0 0 28 28"><path d="M3 6 V16 Q4 24 14 25 L24 25 V20 L14 20 Q9 19 9 14 V6 Z" fill="#2a7a6a" stroke="#1a3a3a" stroke-width="1"/><rect x="12" y="2" width="7" height="15" fill="#4a5ad8" stroke="#22307a" stroke-width="0.8"/><path d="M19 8 H25 M19 12 H24 M20 22 H26" stroke="#3a9ae0" stroke-width="1.5"/></svg>
<svg style="left:147.0px;top:657.085px" width="20" height="20" viewBox="0 0 28 28"><path d="M4 4 V25 H26" fill="none" stroke="#333" stroke-width="1.6"/><path d="M6 6 V23 H26 V19 H10 V6 Z" fill="#fff" stroke="#888" stroke-width="0.8"/><rect x="13" y="2" width="6" height="14" fill="#4a5ad8" stroke="#22307a" stroke-width="0.8"/><path d="M19 7 H26 M19 11 H26" stroke="#3a4ad0" stroke-width="1.4"/></svg>
<svg style="left:147.0px;top:682.815px" width="20" height="20" viewBox="0 0 28 28"><path d="M3 18 Q3 10 12 11 L18 11 Q26 12 25 19 Q25 25 17 25 L15 23 L11 25 Q3 25 3 18 Z" fill="#fff" stroke="#222" stroke-width="1.6"/><rect x="11" y="2" width="6" height="13" fill="#5a6ad8" stroke="#22307a" stroke-width="0.8"/></svg>
<svg style="left:79.5px;top:709.0450000000001px" width="19" height="19" viewBox="0 0 28 28"><path d="M2 9.899999999999999 L13.5 3 L25 9.899999999999999 L13.5 16.799999999999997 Z" fill="#b8c8ff" stroke="#3a4ab0" stroke-width="0.8"/><path d="M2 9.899999999999999 L13.5 16.799999999999997 L13.5 30.14 L2 23.240000000000002 Z" fill="#7a90f0" stroke="#3a4ab0" stroke-width="0.8"/><path d="M25 9.899999999999999 L13.5 16.799999999999997 L13.5 30.14 L25 23.240000000000002 Z" fill="#4a60d8" stroke="#3a4ab0" stroke-width="0.8"/><path d="M7 10 L13 7 L19 10 L13 13 Z" fill="#e0e8ff" stroke="#3a4ab0" stroke-width="0.8"/></svg>
<svg style="left:103.5px;top:734.7750000000001px" width="19" height="19" viewBox="0 0 28 28"><path d="M7 22 V3 M7 22 L20 14 M7 22 L22 27" stroke="#2a4ad0" stroke-width="1.6"/><path d="M7 22 L20 14" stroke="#20a040" stroke-width="2.4"/><path d="M7 22 L21 26" stroke="#d02020" stroke-width="2.4"/><path d="M4 7 L7 2 L10 7 Z" fill="#2a4ad0"/><text x="15" y="9" font-size="8" font-weight="bold" fill="#222" font-family="Liberation Sans">Z</text><text x="22" y="13" font-size="8" font-weight="bold" fill="#222" font-family="Liberation Sans">Y</text><text x="21" y="28" font-size="8" font-weight="bold" fill="#222" font-family="Liberation Sans">X</text></svg>
<svg style="left:125.5px;top:760.505px" width="19" height="19" viewBox="0 0 28 28"><path d="M5 8 L23 8 L14 24 Z M5 19 H23 L14 3 Z" fill="none" stroke="#d040d0" stroke-width="1.6"/><path d="M2 5 L26 23 M8 26 L22 3" stroke="#d040d0" stroke-width="0.9"/></svg>
<svg style="left:129.5px;top:786.235px" width="19" height="19" viewBox="0 0 28 28"><text x="14" y="25" font-size="24" font-weight="bold" fill="#2a3ad0" text-anchor="middle" font-family="Liberation Sans">A</text></svg>
<svg style="left:125.5px;top:811.965px" width="19" height="19" viewBox="0 0 28 28"><path d="M2 17 L14 11 L26 17 L14 23 Z" fill="#8aa0f0" stroke="#3a4ab0" stroke-width="1"/><path d="M2 17 V20 L14 26 L26 20 V17" fill="#5a70d8" stroke="#3a4ab0"/><rect x="11" y="3" width="6" height="14" fill="#6a80e0" stroke="#3a4ab0"/><ellipse cx="14" cy="3.5" rx="3" ry="1.5" fill="#c8d8ff"/></svg>
<svg style="left:79.5px;top:837.695px" width="19" height="19" viewBox="0 0 28 28"><path d="M3 12 Q8 3 16 8 L25 17 L20 25 L10 21 Z" fill="#2a9aa0" stroke="#1a4a5a" stroke-width="1"/><path d="M3 12 L10 21 L20 25 L20 19 L9 14 Z" fill="#3a6ae0"/><path d="M16 8 L25 17 L20 19 L12 11 Z" fill="#60d0d8"/></svg>
<svg style="left:123.0px;top:862.9250000000001px" width="20" height="20" viewBox="0 0 28 28"><path d="M3 6 V16 Q4 24 14 25 L24 25 V20 L14 20 Q9 19 9 14 V6 Z" fill="#2a7a6a" stroke="#1a3a3a" stroke-width="1"/><rect x="12" y="2" width="7" height="15" fill="#4a5ad8" stroke="#22307a" stroke-width="0.8"/><path d="M19 8 H25 M19 12 H24 M20 22 H26" stroke="#3a9ae0" stroke-width="1.5"/></svg>
<svg style="left:229px;top:390px" width="14" height="22" viewBox="0 0 14 22"><path d="M1 1 L1 17 L5 13 L8 20 L10.5 19 L7.5 12 L13 12 Z" fill="#fff" stroke="#222" stroke-width="1"/></svg>
<svg style="left:626px;top:231px" width="1290" height="816" viewBox="626 231 1290 816">
<defs>
<linearGradient id="dome" x1="0" y1="0" x2="1" y2="0.3"><stop offset="0" stop-color="#c8b45e"/><stop offset="0.5" stop-color="#d8c46a"/><stop offset="1" stop-color="#e2ce74"/></linearGradient>
<linearGradient id="plate" x1="0" y1="0" x2="1" y2="0"><stop offset="0" stop-color="#c8b060"/><stop offset="1" stop-color="#d0b868"/></linearGradient>
</defs>
<path d="M806 660 L810 629 L867 632 L869 614 Q878 592 905 580 Q930 570 962 573 Q990 577 1010 583 Q1045 578 1090 575 Q1140 576 1180 588 Q1215 604 1235 632 Q1250 652 1252 668 L1252 673 L1343 698 L1340 732 L1043 712 Z" fill="#c0ac58"/>
<path d="M869 614 Q878 592 905 580 Q930 570 962 573 Q990 577 1010 583 Q1045 578 1090 575 Q1140 576 1180 588 Q1215 604 1235 632 Q1246 648 1250 662 Q1230 652 1200 646 L1000 628 Q930 622 869 614 Z" fill="url(#dome)"/>
<path d="M869 614 Q930 622 1000 628 L1200 646 Q1230 652 1250 662 L1252 673 L1200 664 L1000 648 Q930 640 867 634 Z" fill="#a89850"/>
<path d="M1190 604 Q1215 612 1232 630 Q1246 648 1252 668 L1252 673 L1225 668 Q1215 640 1190 604 Z" fill="#c8b464" opacity="0.9"/>
<path d="M806 660 L810 646 L1043 694 L1343 714 L1340 732 L1043 712 Z" fill="#c8b460"/><path d="M1043 682 L1043 712" stroke="#d8c478" stroke-width="2.5"/>
<path d="M810 629 L867 632 M867 634 L1252 673" stroke="#d8c67a" stroke-width="1"/>
<path d="M990 582 Q1002 610 1010 648" stroke="#bca85c" stroke-width="1" fill="none"/>
<path d="M1018 674 L1132 684 L1128 690 L1020 680 Z" fill="#3a3420"/>
<path d="M1072 710 L1072 650 M1072 690 L1100 700" stroke="#e8e8e8" stroke-width="1.6"/>
<path d="M1068 660 L1072 645 L1076 660 Z" fill="#f0f0f0"/>
<path d="M1090 575 L1107 455" stroke="#1a5ae8" stroke-width="2.6"/>
<path d="M1100 470 L1107 445 L1111 472 Z" fill="#2a6af8"/>
<path d="M1093 540 L1097 510" stroke="#3a7af8" stroke-width="4"/>
<path d="M1090 575 L1185 582" stroke="#d83a3a" stroke-width="1.8"/>
<path d="M1170 577 L1186 582 L1170 587 Z" fill="#e84040"/>
<path d="M1090 575 L1165 597" stroke="#60c8a0" stroke-width="1.4"/>
<text x="1082" y="442" font-size="14" fill="#2a6af0" font-family="Liberation Sans">ZM</text>
<text x="1075" y="502" font-size="14" fill="#2a5ad8" font-family="Liberation Sans">ZC</text>
<text x="1118" y="604" font-size="13" fill="#40b040" font-family="Liberation Sans">YC</text>
<text x="1158" y="614" font-size="13" fill="#40b040" font-family="Liberation Sans">YM</text>
<text x="1162" y="598" font-size="13" fill="#d84040" font-family="Liberation Sans">XM</text>
<text x="1118" y="596" font-size="12" fill="#c84040" font-family="Liberation Sans">XC</text>
<path d="M700 970 L702 925" stroke="#2a4ae0" stroke-width="2"/>
<text x="695" y="927" font-size="12" fill="#2a4ae0" font-family="Liberation Sans">Z</text>
<path d="M702 950 L735 955 L735 983 L702 978 Z" fill="#c8c8c8"/>
<path d="M702 950 L735 955 L735 958 L702 953 Z" fill="#e0e0e0"/>
<path d="M718 952 L718 981" stroke="#aaa"/>
<circle cx="697" cy="975" r="5" fill="#e8e8e8"/>
<path d="M700 976 L733 980" stroke="#e03a3a" stroke-width="2.6"/>
<path d="M700 980 L733 983" stroke="#30b040" stroke-width="1.5"/>
</svg>
<div class="t" style="left:635px;top:1025px;font-size:15px;color:#f0aa58;letter-spacing:1.55px;-webkit-text-stroke:0.3px #f0aa58">正三轴测图 工作 摄像机 正三轴测图</div>
<div class="a" style="left:756px;top:269px;width:780px;height:118px;background:#101010;border-radius:6px 6px 3px 3px;box-shadow:0 0 2px #333"></div>
<div class="a" style="left:757px;top:270px;width:778px;height:9px;background:linear-gradient(#7a7a7a,#2a2a2a);border-radius:5px 5px 0 0"></div>
<div class="t" style="left:767px;top:273px;font-size:16px;font-weight:bold;color:#f4f4f4;letter-spacing:1.5px">导航器</div>
<div class="a" style="left:1508px;top:271px;width:1px;height:25px;background:#555"></div>
<svg style="left:1514px;top:275px" width="17" height="17" viewBox="0 0 17 17"><path d="M2.5 2.5 L14.5 14.5 M14.5 2.5 L2.5 14.5" stroke="#fff" stroke-width="3.2"/></svg>
<svg style="left:1493px;top:280px" width="8" height="5" viewBox="0 0 8 5"><path d="M0 0 H8 L4 4.5 Z" fill="#ddd"/></svg>
<div class="a" style="left:757px;top:297px;width:778px;height:79px;background:linear-gradient(#e8e8e8,#d8d8d8)"></div>
<div class="a" style="left:757px;top:376px;width:778px;height:11px;background:linear-gradient(#2a2a2a,#151515);border-radius:0 0 3px 3px"></div>
<div class="a" style="left:916px;top:300px;width:75px;height:73px;background:#fcfcfc;border:1px solid #8a8a8a;border-radius:3px"></div>
<svg style="left:783.0px;top:303.0px" width="30" height="30" viewBox="0 0 28 28"><rect x="1" y="1" width="10" height="12" fill="#e8f0ff" stroke="#3a4ab0"/><rect x="5" y="5" width="10" height="12" fill="#c8d8ff" stroke="#3a4ab0"/><path d="M16 10 V26 M16 14 H19 M16 20 H19 M16 25 H19" stroke="#2a2a8a" stroke-width="1.2"/><rect x="19" y="11" width="5" height="5" fill="#fff" stroke="#2a2a8a" stroke-width="1.5"/><rect x="19" y="17" width="5" height="5" fill="#fff" stroke="#2a2a8a" stroke-width="1.5"/><rect x="19" y="23" width="5" height="5" fill="#fff" stroke="#2a2a8a" stroke-width="1.5"/></svg>
<div class="t" style="left:767px;top:339px;font-size:15.5px;color:#111;letter-spacing:-0.3px;width:62px;text-align:center">程序顺序</div>
<div class="t" style="left:767px;top:354px;font-size:15.5px;color:#111;letter-spacing:-0.3px;width:62px;text-align:center">视图</div>
<svg style="left:860.0px;top:303.0px" width="30" height="30" viewBox="0 0 28 28"><rect x="3" y="10" width="6" height="15" fill="#4a5ad8" stroke="#22307a"/><rect x="8" y="1" width="6" height="10" fill="#333"/><rect x="6" y="8" width="6" height="5" fill="#f0c030" stroke="#c06020"/><path d="M16 10 V26 M16 14 H19 M16 20 H19 M16 25 H19" stroke="#2a2a8a" stroke-width="1.2"/><rect x="19" y="11" width="5" height="5" fill="#fff" stroke="#2a2a8a" stroke-width="1.5"/><rect x="19" y="17" width="5" height="5" fill="#fff" stroke="#2a2a8a" stroke-width="1.5"/><rect x="19" y="23" width="5" height="5" fill="#fff" stroke="#2a2a8a" stroke-width="1.5"/></svg>
<div class="t" style="left:844px;top:339px;font-size:15.5px;color:#111;letter-spacing:-0.3px;width:62px;text-align:center">机床视图</div>
<svg style="left:937.0px;top:303.0px" width="30" height="30" viewBox="0 0 28 28"><path d="M1 5.5 L8.5 1 L16 5.5 L8.5 10.0 Z" fill="#88d0ff" stroke="none" stroke-width="0.8"/><path d="M1 5.5 L8.5 10.0 L8.5 18.7 L1 14.2 Z" fill="#3a8ae0" stroke="none" stroke-width="0.8"/><path d="M16 5.5 L8.5 10.0 L8.5 18.7 L16 14.2 Z" fill="#2a60c8" stroke="none" stroke-width="0.8"/><circle cx="5" cy="12" r="3.5" fill="#f06030"/><path d="M16 10 V26 M16 14 H19 M16 20 H19 M16 25 H19" stroke="#2a2a8a" stroke-width="1.2"/><rect x="19" y="11" width="5" height="5" fill="#fff" stroke="#2a2a8a" stroke-width="1.5"/><rect x="19" y="17" width="5" height="5" fill="#fff" stroke="#2a2a8a" stroke-width="1.5"/><rect x="19" y="23" width="5" height="5" fill="#fff" stroke="#2a2a8a" stroke-width="1.5"/></svg>
<div class="t" style="left:921px;top:339px;font-size:15.5px;color:#111;letter-spacing:-0.3px;width:62px;text-align:center">几何视图</div>
<svg style="left:1014.0px;top:303.0px" width="30" height="30" viewBox="0 0 28 28"><path d="M1 3 L4 1 L7 3 L10 1 L13 3 L16 1 L19 3 V14 H1 Z" fill="#d8f0ff" stroke="#3a7ab8"/><path d="M2 8 Q5 5 8 8 Q11 11 14 8 Q16 6 18 8" fill="none" stroke="#3a7ab8"/><path d="M16 10 V26 M16 14 H19 M16 20 H19 M16 25 H19" stroke="#2a2a8a" stroke-width="1.2"/><rect x="19" y="11" width="5" height="5" fill="#fff" stroke="#2a2a8a" stroke-width="1.5"/><rect x="19" y="17" width="5" height="5" fill="#fff" stroke="#2a2a8a" stroke-width="1.5"/><rect x="19" y="23" width="5" height="5" fill="#fff" stroke="#2a2a8a" stroke-width="1.5"/></svg>
<div class="t" style="left:998px;top:339px;font-size:15.5px;color:#111;letter-spacing:-0.3px;width:62px;text-align:center">加工方法</div>
<div class="t" style="left:998px;top:354px;font-size:15.5px;color:#111;letter-spacing:-0.3px;width:62px;text-align:center">视图</div>
<svg style="left:1090.0px;top:303.0px" width="30" height="30" viewBox="0 0 28 28"><rect x="4" y="8" width="5" height="16" fill="#6a7ae0"/><path d="M9 12 H16 M9 16 H15" stroke="#888" stroke-width="1.4"/><circle cx="17" cy="6" r="4" fill="#555"/><circle cx="24" cy="6" r="4" fill="#555"/><circle cx="17" cy="6" r="2" fill="#bbb"/><circle cx="24" cy="6" r="2" fill="#bbb"/></svg>
<div class="t" style="left:1074px;top:339px;font-size:15.5px;color:#111;letter-spacing:-0.3px;width:62px;text-align:center">查找对象</div>
<svg style="left:1168.0px;top:303.0px" width="30" height="30" viewBox="0 0 28 28"><polygon points="12.0,8.0 8.5,9.0 10.2,12.2 7.0,10.5 6.0,14.0 5.0,10.5 1.8,12.2 3.5,9.0 0.0,8.0 3.5,7.0 1.8,3.8 5.0,5.5 6.0,2.0 7.0,5.5 10.2,3.8 8.5,7.0" fill="#f6ee3a" stroke="#b8a010" stroke-width="0.5"/><path d="M13 2 H27 L22 10 V15 L18 15 V10 Z" fill="#f8c830" stroke="#c09020"/><rect x="9" y="13" width="6" height="14" fill="#4a5ad8"/><path d="M15 17 H24 M15 21 H22" stroke="#888" stroke-width="1.4"/></svg>
<div class="t" style="left:1152px;top:339px;font-size:15.5px;color:#111;letter-spacing:-0.3px;width:62px;text-align:center">过滤器设</div>
<div class="t" style="left:1152px;top:354px;font-size:15.5px;color:#111;letter-spacing:-0.3px;width:62px;text-align:center">置</div>
<svg style="left:1245.0px;top:303.0px" width="30" height="30" viewBox="0 0 28 28"><path d="M1 8 L5 13 L12 3" fill="none" stroke="#20b040" stroke-width="3"/><path d="M13 2 H27 L22 10 V15 L18 15 V10 Z" fill="#f8c830" stroke="#c09020"/><rect x="9" y="13" width="6" height="14" fill="#4a5ad8"/><path d="M15 17 H24 M15 21 H22" stroke="#888" stroke-width="1.4"/></svg>
<div class="t" style="left:1229px;top:339px;font-size:15.5px;color:#111;letter-spacing:-0.3px;width:62px;text-align:center">应用过滤</div>
<div class="t" style="left:1229px;top:354px;font-size:15.5px;color:#111;letter-spacing:-0.3px;width:62px;text-align:center">器</div>
<svg style="left:1321.0px;top:303.0px" width="30" height="30" viewBox="0 0 28 28"><rect x="2" y="2" width="7" height="7" fill="#fff" stroke="#222" stroke-width="1"/><path d="M3.5 5.5 H7.5" stroke="#222"/><path d="M5.5 3.5 V7.5" stroke="#222"/><rect x="2" y="11" width="7" height="7" fill="#fff" stroke="#222" stroke-width="1"/><path d="M3.5 14.5 H7.5" stroke="#222"/><path d="M5.5 12.5 V16.5" stroke="#222"/><rect x="2" y="20" width="7" height="7" fill="#fff" stroke="#222" stroke-width="1"/><path d="M3.5 23.5 H7.5" stroke="#222"/><path d="M5.5 21.5 V25.5" stroke="#222"/><path d="M9 5 H13 M9 14 H13 M9 23 H13" stroke="#555"/><path d="M14 3 L19 6 L14 9 Z M14 12 L19 15 L14 18 Z" fill="#f08030"/><rect x="15" y="20" width="4" height="7" fill="#4a5ad8"/></svg>
<div class="t" style="left:1305px;top:339px;font-size:15.5px;color:#111;letter-spacing:-0.3px;width:62px;text-align:center">全部展开</div>
<svg style="left:1398.0px;top:303.0px" width="30" height="30" viewBox="0 0 28 28"><rect x="2" y="2" width="7" height="7" fill="#fff" stroke="#222" stroke-width="1"/><path d="M3.5 5.5 H7.5" stroke="#222"/><rect x="2" y="11" width="7" height="7" fill="#fff" stroke="#222" stroke-width="1"/><path d="M3.5 14.5 H7.5" stroke="#222"/><rect x="2" y="20" width="7" height="7" fill="#fff" stroke="#222" stroke-width="1"/><path d="M3.5 23.5 H7.5" stroke="#222"/><path d="M9 5 H13 M9 14 H13 M9 23 H13" stroke="#555"/><path d="M14 3 L19 6 L14 9 Z M14 12 L19 15 L14 18 Z" fill="#f08030"/><rect x="15" y="20" width="4" height="7" fill="#4a5ad8"/></svg>
<div class="t" style="left:1382px;top:339px;font-size:15.5px;color:#111;letter-spacing:-0.3px;width:62px;text-align:center">全部折叠</div>
<svg style="left:1475.0px;top:303.0px" width="30" height="30" viewBox="0 0 28 28"><rect x="4" y="1" width="6" height="15" fill="#4a5ad8"/><path d="M10 6 H16" stroke="#555" stroke-width="1.4"/><path d="M8 10 L16 14" stroke="#c020c0" stroke-width="3"/><path d="M13 12 H27 V27 H13 Z" fill="#f8f0c0" stroke="#b0a040"/><circle cx="20" cy="20" r="4.5" fill="#2a9a9a"/><circle cx="19" cy="19" r="2" fill="#60a0f0"/></svg>
<div class="t" style="left:1459px;top:339px;font-size:15.5px;color:#111;letter-spacing:-0.3px;width:62px;text-align:center">导出工序</div>
<div class="t" style="left:1459px;top:354px;font-size:15.5px;color:#111;letter-spacing:-0.3px;width:62px;text-align:center">导航树至</div>
<div class="t" style="left:54.099999999999994px;top:934px;width:120px;text-align:center;font-size:86px;font-weight:900;transform:scaleX(0.78);color:#fff;-webkit-text-stroke:9px #fff">星</div>
<div class="t" style="left:120.9px;top:934px;width:120px;text-align:center;font-size:86px;font-weight:900;transform:scaleX(0.78);color:#fff;-webkit-text-stroke:9px #fff">航</div>
<div class="t" style="left:183.9px;top:923px;width:120px;text-align:center;font-size:108px;font-weight:900;transform:scaleX(0.71);color:#fff;-webkit-text-stroke:9px #fff">U</div>
<div class="t" style="left:235.5px;top:923px;width:120px;text-align:center;font-size:108px;font-weight:900;transform:scaleX(0.71);color:#fff;-webkit-text-stroke:9px #fff">G</div>
<div class="t" style="left:297px;top:934px;width:120px;text-align:center;font-size:86px;font-weight:900;transform:scaleX(0.78);color:#fff;-webkit-text-stroke:9px #fff">网</div>
<div class="t" style="left:363.3px;top:934px;width:120px;text-align:center;font-size:86px;font-weight:900;transform:scaleX(0.78);color:#fff;-webkit-text-stroke:9px #fff">耀</div>
<div class="t" style="left:432.8px;top:934px;width:120px;text-align:center;font-size:86px;font-weight:900;transform:scaleX(0.78);color:#fff;-webkit-text-stroke:9px #fff">白</div>
<div class="t" style="left:498.79999999999995px;top:934px;width:120px;text-align:center;font-size:86px;font-weight:900;transform:scaleX(0.78);color:#fff;-webkit-text-stroke:9px #fff">老</div>
<div class="t" style="left:566.7px;top:934px;width:120px;text-align:center;font-size:86px;font-weight:900;transform:scaleX(0.78);color:#fff;-webkit-text-stroke:9px #fff">师</div>
<div class="t" style="left:54.099999999999994px;top:934px;width:120px;text-align:center;font-size:86px;font-weight:900;transform:scaleX(0.78);color:#f40d0d;-webkit-text-stroke:3.5px #f40d0d">星</div>
<div class="t" style="left:120.9px;top:934px;width:120px;text-align:center;font-size:86px;font-weight:900;transform:scaleX(0.78);color:#f40d0d;-webkit-text-stroke:3.5px #f40d0d">航</div>
<div class="t" style="left:183.9px;top:923px;width:120px;text-align:center;font-size:108px;font-weight:900;transform:scaleX(0.71);color:#f40d0d;-webkit-text-stroke:3.5px #f40d0d">U</div>
<div class="t" style="left:235.5px;top:923px;width:120px;text-align:center;font-size:108px;font-weight:900;transform:scaleX(0.71);color:#f40d0d;-webkit-text-stroke:3.5px #f40d0d">G</div>
<div class="t" style="left:297px;top:934px;width:120px;text-align:center;font-size:86px;font-weight:900;transform:scaleX(0.78);color:#f40d0d;-webkit-text-stroke:3.5px #f40d0d">网</div>
<div class="t" style="left:363.3px;top:934px;width:120px;text-align:center;font-size:86px;font-weight:900;transform:scaleX(0.78);color:#f40d0d;-webkit-text-stroke:3.5px #f40d0d">耀</div>
<div class="t" style="left:432.8px;top:934px;width:120px;text-align:center;font-size:86px;font-weight:900;transform:scaleX(0.78);color:#f40d0d;-webkit-text-stroke:3.5px #f40d0d">白</div>
<div class="t" style="left:498.79999999999995px;top:934px;width:120px;text-align:center;font-size:86px;font-weight:900;transform:scaleX(0.78);color:#f40d0d;-webkit-text-stroke:3.5px #f40d0d">老</div>
<div class="t" style="left:566.7px;top:934px;width:120px;text-align:center;font-size:86px;font-weight:900;transform:scaleX(0.78);color:#f40d0d;-webkit-text-stroke:3.5px #f40d0d">师</div>
<svg style="left:1826px;top:1050px" width="22" height="22" viewBox="0 0 22 22"><path d="M2 6 V2 H6 M16 2 H20 V6 M20 16 V20 H16 M6 20 H2 V16" fill="none" stroke="#888" stroke-width="1.2"/><rect x="5" y="6" width="12" height="10" fill="#3a8ae0" stroke="#333" stroke-width="1.3"/><rect x="6" y="7" width="10" height="3" fill="#a8d0f8"/></svg>
</body></html>
